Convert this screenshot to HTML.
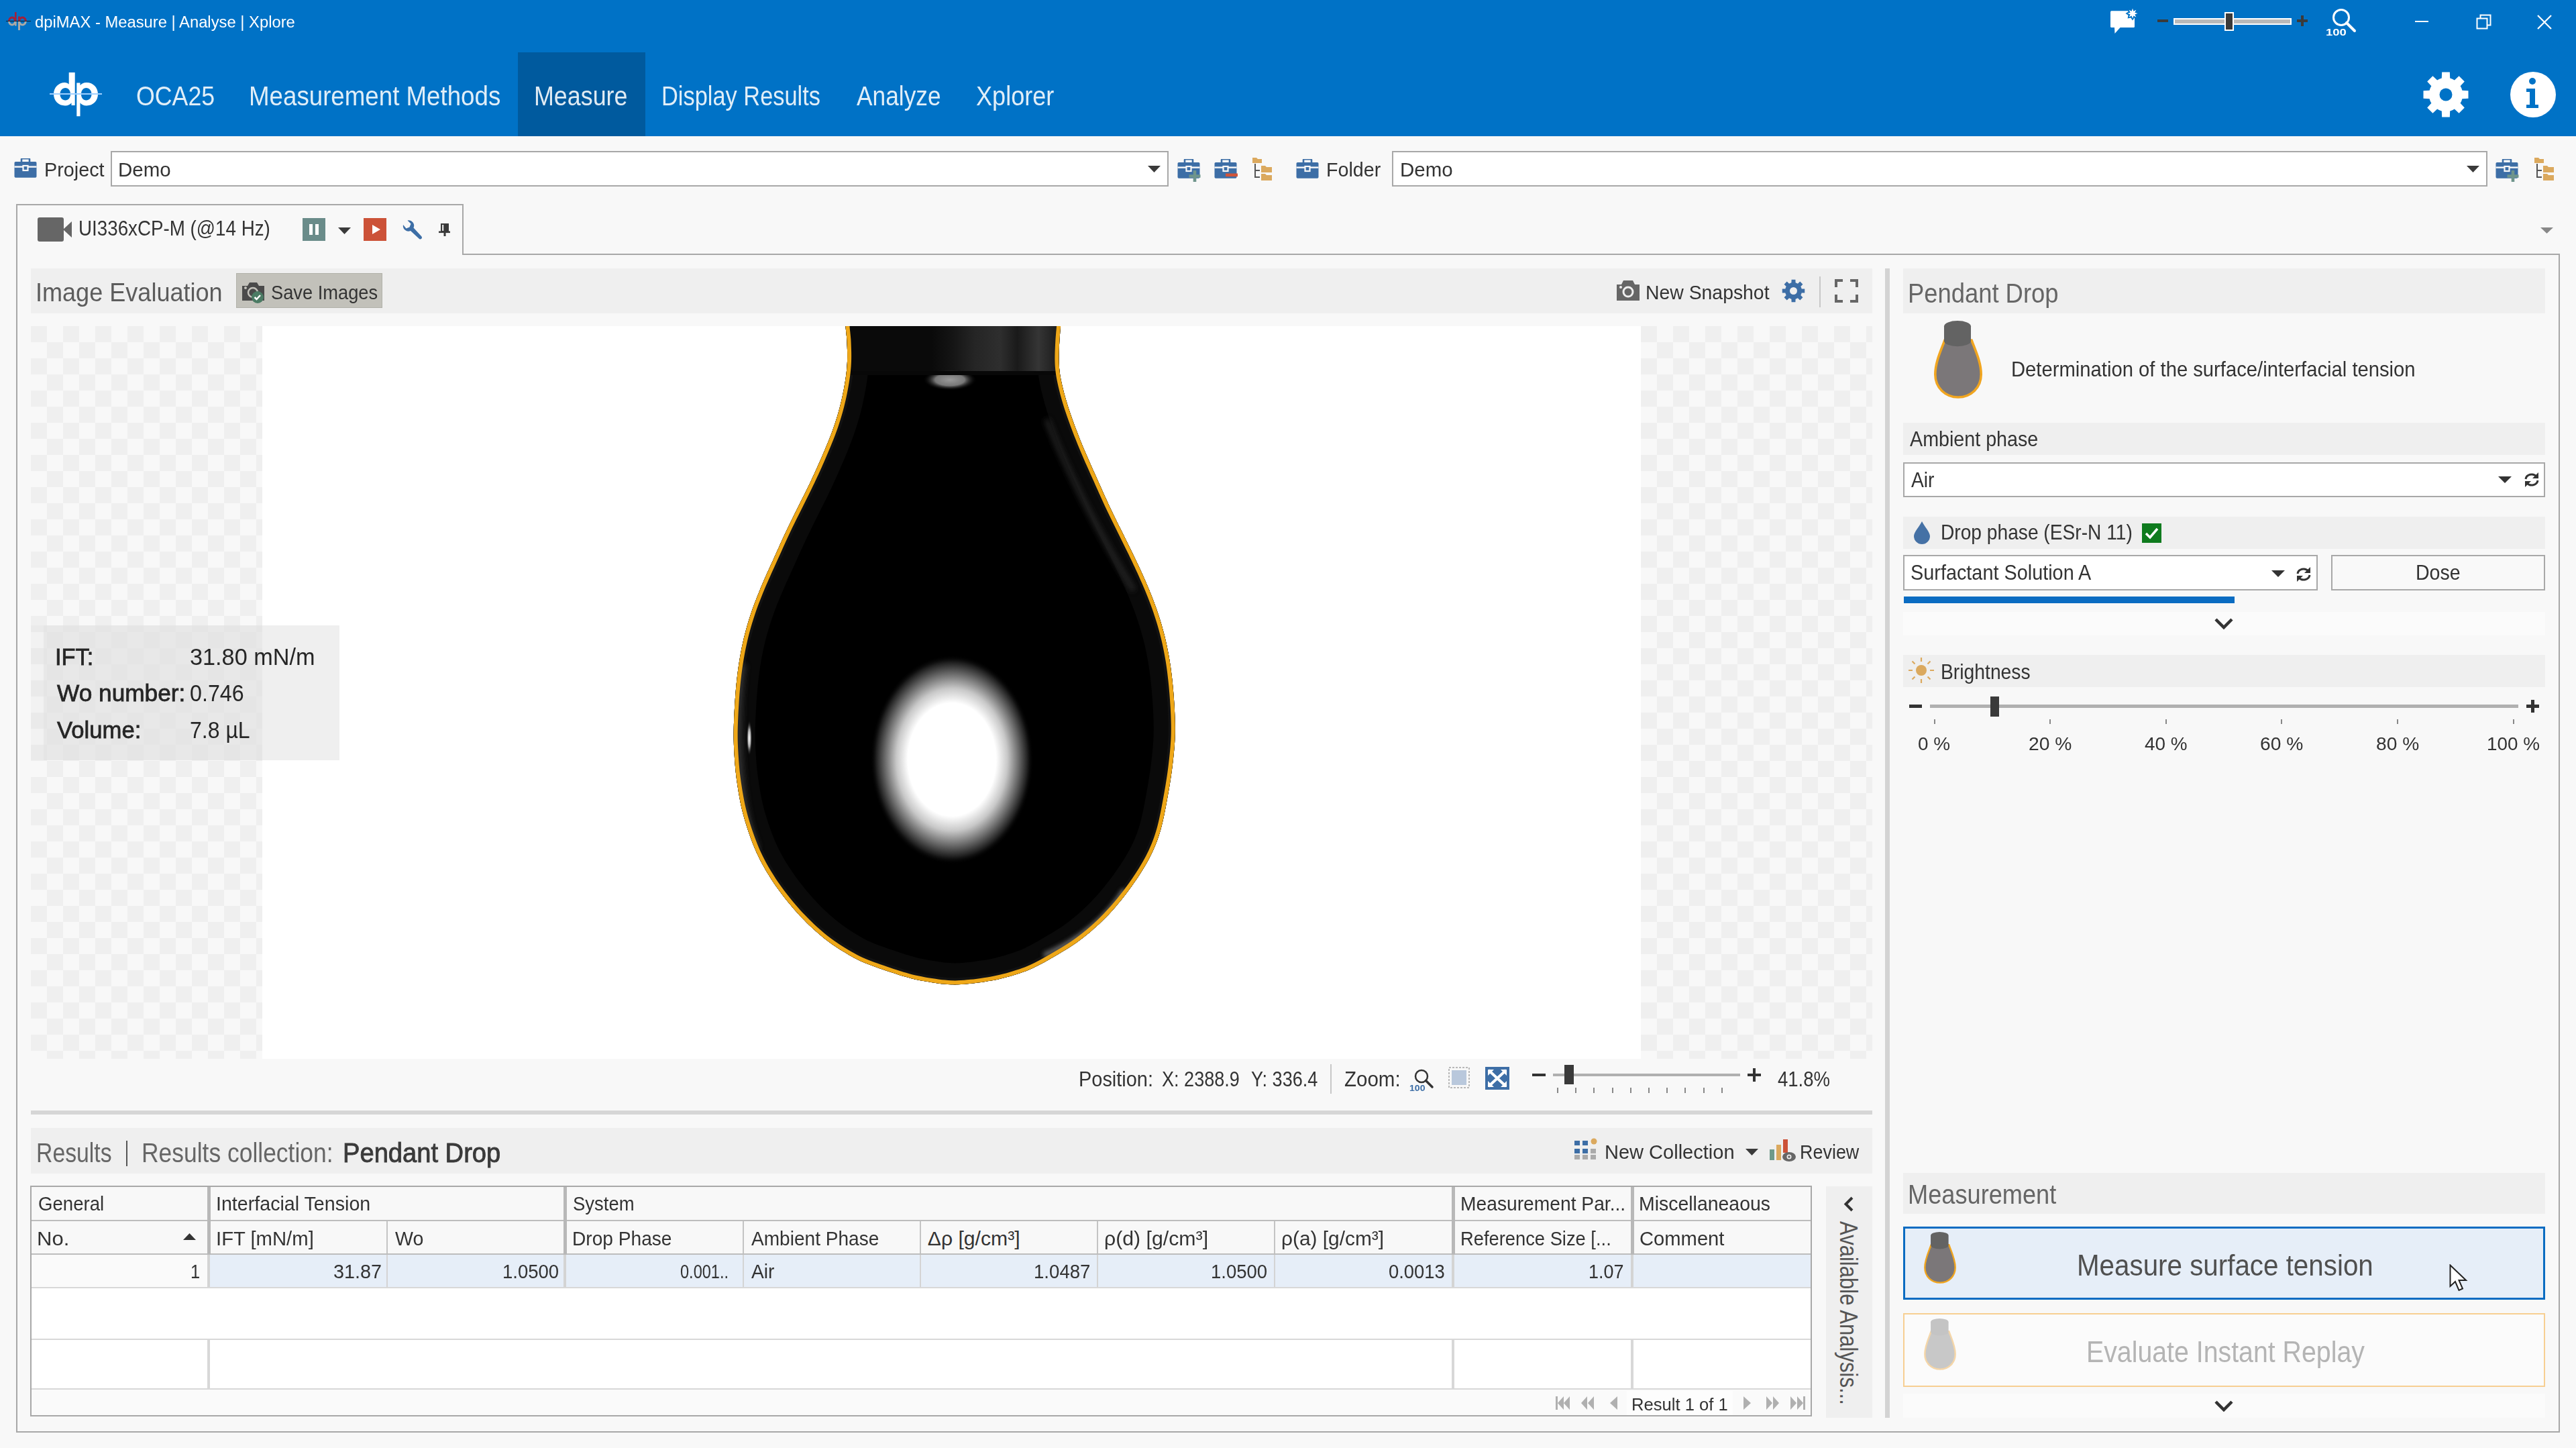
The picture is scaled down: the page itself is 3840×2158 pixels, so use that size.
<!DOCTYPE html>
<html><head><meta charset="utf-8"><title>dpiMAX</title>
<style>
html,body{margin:0;padding:0}
body{width:3840px;height:2158px;position:relative;overflow:hidden;background:#f8f8f8;font-family:"Liberation Sans",sans-serif}
.r{position:absolute;display:block}
.t{position:absolute;white-space:nowrap;transform-origin:0 0;font-family:"Liberation Sans",sans-serif}
</style></head><body>
<div class="r" style="left:0px;top:0px;width:3840px;height:203px;background:#0072c6;"></div>
<div class="r" style="left:772px;top:78px;width:190px;height:125px;background:#005a9e;"></div>
<svg class="r" style="left:8px;top:16px" width="40" height="32" viewBox="0 0 40 32">
<defs><clipPath id="ct"><rect x="0" y="0" width="40" height="15.5"/></clipPath><clipPath id="cb"><rect x="0" y="15.5" width="40" height="17"/></clipPath></defs>
<g clip-path="url(#ct)" fill="#a3203a"><path fill-rule="evenodd" d="M10 8.5a6 7 0 1 0 0.01 0zM10 11.5a3.2 4 0 1 1 -0.01 0z"/><rect x="14" y="2" width="2.6" height="20.5"/><path fill-rule="evenodd" d="M25.5 8.5a6.3 7 0 1 0 0.01 0zM25.5 11.5a3.3 4 0 1 1 -0.01 0z"/><rect x="19" y="8.5" width="3" height="20.5"/></g>
<g clip-path="url(#cb)" fill="#aaa9a6"><path fill-rule="evenodd" d="M10 8.5a6 7 0 1 0 0.01 0zM10 11.5a3.2 4 0 1 1 -0.01 0z"/><rect x="14" y="2" width="2.6" height="20.5"/><path fill-rule="evenodd" d="M25.5 8.5a6.3 7 0 1 0 0.01 0zM25.5 11.5a3.3 4 0 1 1 -0.01 0z"/><rect x="19" y="8.5" width="3" height="20.5"/></g>
<rect x="1" y="15" width="37" height="1" fill="#123"/>
</svg>
<div class="t" style="left:51.99px;top:20.84px;font-size:24.42px;line-height:24.42px;font-weight:400;color:#fff;transform:scaleX(0.9746);">dpiMAX - Measure | Analyse | Xplore</div>
<svg class="r" style="left:70px;top:104px" width="86" height="74" viewBox="0 0 86 74">
<g fill="#fff">
<path fill-rule="evenodd" d="M27 19c-10 0 -17 7.5 -17 17.3s7 17.2 17 17.2c4.5 0 7.5 -1.8 9.5 -4.2v3.7h5.2v-49h-9v17.5c-2 -1.8 -5 -2.5 -5.7 -2.5zM27.5 27c4.5 0 7.5 4 7.5 9.3s-3 9.3 -7.5 9.3s-8 -4 -8 -9.3s3.5 -9.3 8 -9.3z"/>
<path fill-rule="evenodd" d="M59 19c10 0 17 7.5 17 17.3s-7 17.2 -17 17.2c-4.5 0 -7.5 -1.8 -9.5 -4.2v20h-5.2v-49.8h5.2v3.7c2 -2.4 5 -4.2 9.5 -4.2zM58.5 27c-4.5 0 -7.5 4 -7.5 9.3s3 9.3 7.5 9.3s8 -4 8 -9.3s-3.5 -9.3 -8 -9.3z"/>
</g>
<rect x="4" y="35" width="78" height="2" fill="#9fd0ff"/>
</svg>
<div class="t" style="left:203.30px;top:124.18px;font-size:39.97px;line-height:39.97px;font-weight:400;color:rgba(255,255,255,0.88);transform:scaleX(0.8941);">OCA25</div>
<div class="t" style="left:370.97px;top:124.18px;font-size:39.97px;line-height:39.97px;font-weight:400;color:rgba(255,255,255,0.88);transform:scaleX(0.9181);">Measurement Methods</div>
<div class="t" style="left:796.04px;top:124.18px;font-size:39.97px;line-height:39.97px;font-weight:400;color:rgba(255,255,255,0.88);transform:scaleX(0.8971);">Measure</div>
<div class="t" style="left:986.16px;top:124.18px;font-size:39.97px;line-height:39.97px;font-weight:400;color:rgba(255,255,255,0.88);transform:scaleX(0.8604);">Display Results</div>
<div class="t" style="left:1276.91px;top:124.18px;font-size:39.97px;line-height:39.97px;font-weight:400;color:rgba(255,255,255,0.88);transform:scaleX(0.8832);">Analyze</div>
<div class="t" style="left:1455.19px;top:124.18px;font-size:39.97px;line-height:39.97px;font-weight:400;color:rgba(255,255,255,0.88);transform:scaleX(0.9033);">Xplorer</div>
<svg class="r" style="left:3146px;top:6px" width="44" height="46" viewBox="0 0 44 46">
<rect x="0" y="10.3" width="36" height="24.7" rx="1.5" fill="#fff"/>
<path d="M6 34.5L6.5 44L15 34.5Z" fill="#fff"/>
<path d="M33.00 3.60 L35.68 7.63 L40.42 6.68 L39.47 11.42 L43.50 14.10 L39.47 16.78 L40.42 21.52 L35.68 20.57 L33.00 24.60 L30.32 20.57 L25.58 21.52 L26.53 16.78 L22.50 14.10 L26.53 11.42 L25.58 6.68 L30.32 7.63Z" fill="#0072c6"/>
<path d="M33.00 6.50 L34.38 10.77 L38.37 8.73 L36.33 12.72 L40.60 14.10 L36.33 15.48 L38.37 19.47 L34.38 17.43 L33.00 21.70 L31.62 17.43 L27.63 19.47 L29.67 15.48 L25.40 14.10 L29.67 12.72 L27.63 8.73 L31.62 10.77Z" fill="#fff"/>
</svg>
<div class="r" style="left:3216px;top:29px;width:16px;height:4px;background:#3a3a3a;"></div>
<div class="r" style="left:3240px;top:27px;width:176px;height:10px;background:#fff;"></div>
<div class="r" style="left:3242px;top:29px;width:172px;height:6px;background:#b9b9b9;"></div>
<div class="r" style="left:3316px;top:18px;width:14px;height:28px;background:#fff;"></div>
<div class="r" style="left:3318px;top:20px;width:10px;height:24px;background:#3a3a3a;"></div>
<div class="r" style="left:3424px;top:29px;width:16px;height:4px;background:#3a3a3a;"></div>
<div class="r" style="left:3430px;top:23px;width:4px;height:16px;background:#3a3a3a;"></div>
<svg class="r" style="left:3466px;top:10px" width="50" height="46" viewBox="0 0 50 46">
<circle cx="24" cy="16" r="11.5" fill="none" stroke="#fff" stroke-width="3"/>
<path d="M32 24 L44 36" stroke="#fff" stroke-width="4" stroke-linecap="round"/>
</svg>
<div class="t" style="left:3466.84px;top:40.70px;font-size:14.53px;line-height:14.53px;font-weight:700;color:#fff;transform:scaleX(1.2749);">100</div>
<div class="r" style="left:3600px;top:31px;width:20px;height:2px;background:#fff;"></div>
<svg class="r" style="left:3690px;top:20px" width="26" height="26" viewBox="0 0 26 26">
<rect x="2.5" y="7.5" width="15" height="15" fill="none" stroke="#fff" stroke-width="2"/>
<path d="M7.5 7.5V2.5H22.5V17.5H17.5" fill="none" stroke="#fff" stroke-width="2"/>
</svg>
<svg class="r" style="left:3780px;top:20px" width="26" height="26" viewBox="0 0 26 26">
<path d="M3 3L23 23M23 3L3 23" stroke="#fff" stroke-width="2.2"/>
</svg>
<svg class="r" style="left:3606px;top:101px" width="80" height="80" viewBox="0 0 80 80"><path d="M30.37 16.76 L33.81 15.61 L34.15 6.51 L45.85 6.51 L46.19 15.61 L49.63 16.76 L52.87 18.38 L59.55 12.18 L67.82 20.45 L61.62 27.13 L63.24 30.37 L64.39 33.81 L73.49 34.15 L73.49 45.85 L64.39 46.19 L63.24 49.63 L61.62 52.87 L67.82 59.55 L59.55 67.82 L52.87 61.62 L49.63 63.24 L46.19 64.39 L45.85 73.49 L34.15 73.49 L33.81 64.39 L30.37 63.24 L27.13 61.62 L20.45 67.82 L12.18 59.55 L18.38 52.87 L16.76 49.63 L15.61 46.19 L6.51 45.85 L6.51 34.15 L15.61 33.81 L16.76 30.37 L18.38 27.13 L12.18 20.45 L20.45 12.18 L27.13 18.38Z" fill="#fff"/><circle cx="40" cy="40" r="9.5" fill="#0072c6"/></svg>
<svg class="r" style="left:3741px;top:106px" width="70" height="70" viewBox="0 0 70 70">
<circle cx="35" cy="35" r="34" fill="#fff"/>
<circle cx="34" cy="15" r="5" fill="#0072c6"/>
<path d="M25 26H38V50H43V55H25V50H30V31H25Z" fill="#0072c6"/>
</svg>
<svg class="r" style="left:21px;top:236px" width="42" height="37" viewBox="0 0 42 37">
<path d="M11 5.5V1.5Q11 0.3 12.2 0.3H21.8Q23 0.3 23 1.5V5.5" fill="none" stroke="#3d6ea6" stroke-width="2.6"/>
<rect x="0.5" y="5" width="33" height="23.7" rx="1.8" fill="#3d6ea6"/>
<rect x="0.5" y="11.4" width="33" height="2.4" fill="#f8f8f8"/>
<rect x="13.5" y="11" width="7" height="7" fill="#3d6ea6" stroke="#f8f8f8" stroke-width="2.2"/></svg>
<div class="t" style="left:65.63px;top:237.79px;font-size:29.80px;line-height:29.80px;font-weight:400;color:#333;transform:scaleX(0.9660);">Project</div>
<div class="r" style="left:165px;top:225px;width:1577px;height:53px;background:#fff;border:2px solid #a8a8a8;box-sizing:border-box"></div>
<div class="t" style="left:175.57px;top:237.79px;font-size:29.80px;line-height:29.80px;font-weight:400;color:#333;transform:scaleX(0.9890);">Demo</div>
<svg class="r" style="left:1711px;top:247px" width="19" height="10" viewBox="0 0 19 10"><path d="M0 0H19L9.5 10Z" fill="#3a3a3a"/></svg>
<svg class="r" style="left:1755px;top:237px" width="42" height="37" viewBox="0 0 42 37">
<path d="M11 5.5V1.5Q11 0.3 12.2 0.3H21.8Q23 0.3 23 1.5V5.5" fill="none" stroke="#3d6ea6" stroke-width="2.6"/>
<rect x="0.5" y="5" width="33" height="23.7" rx="1.8" fill="#3d6ea6"/>
<rect x="0.5" y="11.4" width="33" height="2.4" fill="#f8f8f8"/>
<rect x="13.5" y="11" width="7" height="7" fill="#3d6ea6" stroke="#f8f8f8" stroke-width="2.2"/><path d="M26 17V34M17.5 25.5H34.5" stroke="#6f958c" stroke-width="4.6"/></svg>
<svg class="r" style="left:1810px;top:237px" width="42" height="37" viewBox="0 0 42 37">
<path d="M11 5.5V1.5Q11 0.3 12.2 0.3H21.8Q23 0.3 23 1.5V5.5" fill="none" stroke="#3d6ea6" stroke-width="2.6"/>
<rect x="0.5" y="5" width="33" height="23.7" rx="1.8" fill="#3d6ea6"/>
<rect x="0.5" y="11.4" width="33" height="2.4" fill="#f8f8f8"/>
<rect x="13.5" y="11" width="7" height="7" fill="#3d6ea6" stroke="#f8f8f8" stroke-width="2.2"/><rect x="17" y="21.5" width="18" height="4.6" fill="#d0543a"/></svg>
<svg class="r" style="left:1866px;top:234px" width="32" height="36" viewBox="0 0 32 36">
<path d="M1 1h6l2 2h6v6H1z" fill="#dba95e"/>
<path d="M5 10V30H12M5 20H12" fill="none" stroke="#555" stroke-width="2"/>
<path d="M14 13h6l2 2h8v8H14z" fill="#dba95e"/>
<path d="M14 25h6l2 2h8v8H14z" fill="#dba95e"/>
</svg>
<svg class="r" style="left:1932px;top:237px" width="42" height="37" viewBox="0 0 42 37">
<path d="M11 5.5V1.5Q11 0.3 12.2 0.3H21.8Q23 0.3 23 1.5V5.5" fill="none" stroke="#3d6ea6" stroke-width="2.6"/>
<rect x="0.5" y="5" width="33" height="23.7" rx="1.8" fill="#3d6ea6"/>
<rect x="0.5" y="11.4" width="33" height="2.4" fill="#f8f8f8"/>
<rect x="13.5" y="11" width="7" height="7" fill="#3d6ea6" stroke="#f8f8f8" stroke-width="2.2"/></svg>
<div class="t" style="left:1976.63px;top:237.79px;font-size:29.80px;line-height:29.80px;font-weight:400;color:#333;transform:scaleX(0.9624);">Folder</div>
<div class="r" style="left:2075px;top:225px;width:1633px;height:53px;background:#fff;border:2px solid #a8a8a8;box-sizing:border-box"></div>
<div class="t" style="left:2086.57px;top:237.79px;font-size:29.80px;line-height:29.80px;font-weight:400;color:#333;transform:scaleX(0.9890);">Demo</div>
<svg class="r" style="left:3677px;top:247px" width="19" height="10" viewBox="0 0 19 10"><path d="M0 0H19L9.5 10Z" fill="#3a3a3a"/></svg>
<svg class="r" style="left:3720px;top:237px" width="42" height="37" viewBox="0 0 42 37">
<path d="M11 5.5V1.5Q11 0.3 12.2 0.3H21.8Q23 0.3 23 1.5V5.5" fill="none" stroke="#3d6ea6" stroke-width="2.6"/>
<rect x="0.5" y="5" width="33" height="23.7" rx="1.8" fill="#3d6ea6"/>
<rect x="0.5" y="11.4" width="33" height="2.4" fill="#f8f8f8"/>
<rect x="13.5" y="11" width="7" height="7" fill="#3d6ea6" stroke="#f8f8f8" stroke-width="2.2"/><path d="M26 17V34M17.5 25.5H34.5" stroke="#6f958c" stroke-width="4.6"/></svg>
<svg class="r" style="left:3777px;top:234px" width="32" height="36" viewBox="0 0 32 36">
<path d="M1 1h6l2 2h6v6H1z" fill="#dba95e"/>
<path d="M5 10V30H12M5 20H12" fill="none" stroke="#555" stroke-width="2"/>
<path d="M14 13h6l2 2h8v8H14z" fill="#dba95e"/>
<path d="M14 25h6l2 2h8v8H14z" fill="#dba95e"/>
</svg>
<div class="r" style="left:24px;top:304px;width:667px;height:2px;background:#a8a8a8;"></div>
<div class="r" style="left:24px;top:304px;width:2px;height:1831px;background:#a8a8a8;"></div>
<div class="r" style="left:689px;top:304px;width:2px;height:76px;background:#a8a8a8;"></div>
<div class="r" style="left:689px;top:378px;width:3127px;height:2px;background:#a8a8a8;"></div>
<div class="r" style="left:3814px;top:378px;width:2px;height:1757px;background:#a8a8a8;"></div>
<div class="r" style="left:24px;top:2133px;width:3792px;height:2px;background:#a8a8a8;"></div>
<svg class="r" style="left:3787px;top:339px" width="19" height="9" viewBox="0 0 19 9"><path d="M0 0H19L9.5 9Z" fill="#888"/></svg>
<svg class="r" style="left:56px;top:324px" width="52" height="36" viewBox="0 0 52 36">
<rect x="0" y="0" width="39" height="36" rx="3" fill="#666"/>
<path d="M38 18L51 6V30Z" fill="#666"/>
</svg>
<div class="t" style="left:116.85px;top:325.06px;font-size:31.25px;line-height:31.25px;font-weight:400;color:#333;transform:scaleX(0.8884);">UI336xCP-M (@14 Hz)</div>
<svg class="r" style="left:451px;top:325px" width="35" height="34" viewBox="0 0 35 34">
<rect x="0" y="0" width="34" height="34" fill="#6a8c8a"/>
<rect x="10" y="9" width="5" height="16" fill="#fff"/><rect x="19" y="9" width="5" height="16" fill="#fff"/>
</svg>
<svg class="r" style="left:504px;top:339px" width="19" height="10" viewBox="0 0 19 10"><path d="M0 0H19L9.5 10Z" fill="#3a3a3a"/></svg>
<svg class="r" style="left:542px;top:325px" width="35" height="34" viewBox="0 0 35 34">
<rect x="0" y="0" width="34" height="34" fill="#cc5238"/>
<path d="M13 10L25 17L13 24Z" fill="#fff"/>
</svg>
<svg class="r" style="left:598px;top:327px" width="32" height="31" viewBox="0 0 32 31">
<path d="M3 8a8 8 0 0 0 11 9l13 12a2.5 2.5 0 0 0 3.5-3.5l-12-13a8 8 0 0 0-9-11l5 5-2 5-5 2z" fill="#3d6ea6"/>
</svg>
<svg class="r" style="left:653px;top:332px" width="20" height="21" viewBox="0 0 20 21">
<rect x="4" y="1" width="12" height="13" fill="#3a3a3a"/>
<rect x="6.2" y="3" width="2" height="9" fill="#f8f8f8"/>
<rect x="1" y="12.5" width="17" height="2.6" fill="#3a3a3a"/>
<rect x="8.5" y="15" width="3" height="5" fill="#3a3a3a"/>
</svg>
<div class="r" style="left:46px;top:400px;width:2745px;height:67px;background:#efefef;"></div>
<div class="t" style="left:52.66px;top:417.41px;font-size:38.52px;line-height:38.52px;font-weight:400;color:#5c5c5c;transform:scaleX(0.9363);">Image Evaluation</div>
<div class="r" style="left:352px;top:407px;width:218px;height:52px;background:#c2c1ba;border:1px solid #b2b2aa;box-sizing:border-box"></div>
<svg class="r" style="left:361px;top:418px" width="36" height="36" viewBox="0 0 36 36">
<path d="M0 8H8L11 3H22L25 8H33V30H0Z" fill="#4a4a4a"/>
<circle cx="16" cy="18" r="7" fill="none" stroke="#c2c1ba" stroke-width="2.5"/>
<circle cx="5" cy="11" r="2" fill="#c2c1ba"/>
<circle cx="23" cy="25" r="9" fill="#4b7b64"/>
<path d="M18.5 25l3 3 5.5-6" fill="none" stroke="#fff" stroke-width="2.5"/>
</svg>
<div class="t" style="left:403.77px;top:420.79px;font-size:29.80px;line-height:29.80px;font-weight:400;color:#333;transform:scaleX(0.9152);">Save Images</div>
<svg class="r" style="left:2410px;top:418px" width="35" height="31" viewBox="0 0 35 31">
<path d="M0 6H7L10 0H24L27 6H34V30H0Z" fill="#666"/>
<circle cx="17" cy="17" r="7" fill="none" stroke="#efefef" stroke-width="3"/>
<circle cx="6" cy="10" r="2" fill="#efefef"/>
</svg>
<div class="t" style="left:2452.66px;top:420.79px;font-size:29.80px;line-height:29.80px;font-weight:400;color:#333;transform:scaleX(0.9522);">New Snapshot</div>
<svg class="r" style="left:2656px;top:416px" width="35" height="35" viewBox="0 0 35 35"><path d="M12.69 5.88 L14.41 5.31 L14.58 0.75 L20.42 0.75 L20.59 5.31 L22.31 5.88 L23.94 6.69 L27.28 3.59 L31.41 7.72 L28.31 11.06 L29.12 12.69 L29.69 14.41 L34.25 14.58 L34.25 20.42 L29.69 20.59 L29.12 22.31 L28.31 23.94 L31.41 27.28 L27.28 31.41 L23.94 28.31 L22.31 29.12 L20.59 29.69 L20.42 34.25 L14.58 34.25 L14.41 29.69 L12.69 29.12 L11.06 28.31 L7.72 31.41 L3.59 27.28 L6.69 23.94 L5.88 22.31 L5.31 20.59 L0.75 20.42 L0.75 14.58 L5.31 14.41 L5.88 12.69 L6.69 11.06 L3.59 7.72 L7.72 3.59 L11.06 6.69Z" fill="#3d6ea6"/><circle cx="17.5" cy="17.5" r="5.5" fill="#efefef"/></svg>
<div class="r" style="left:2712px;top:412px;width:2px;height:46px;background:#c8c8c8;"></div>
<svg class="r" style="left:2735px;top:416px" width="35" height="35" viewBox="0 0 35 35">
<path d="M0 12V0H12V4H4V12Z M23 0H35V12H31V4H23Z M0 23H4V31H12V35H0Z M31 23H35V35H23V31H31Z" fill="#666"/>
</svg>
<div class="r" style="left:46px;top:486px;width:2745px;height:1092px;background:repeating-conic-gradient(#f8f8f8 0 25%,#efefef 0 50%) 0 0/48px 48px"></div>
<div class="r" style="left:391px;top:486px;width:2055px;height:1092px;background:#fff;"></div>
<svg class="r" style="left:391px;top:486px" width="2055" height="1092" viewBox="391 486 2055 1092">
<defs>
<radialGradient id="hl" cx="1419" cy="1132" r="156" gradientUnits="userSpaceOnUse" gradientTransform="translate(1419 1132) scale(0.78 1) translate(-1419 -1132)">
<stop offset="0" stop-color="#fff"/><stop offset="0.54" stop-color="#fff"/><stop offset="0.68" stop-color="#c8c8c8"/><stop offset="0.82" stop-color="#6a6a6a"/><stop offset="0.93" stop-color="#1e1e1e"/><stop offset="1" stop-color="#000" stop-opacity="0"/>
</radialGradient>
<radialGradient id="nh"><stop offset="0" stop-color="#9a9a9a"/><stop offset="0.55" stop-color="#777"/><stop offset="1" stop-color="#000" stop-opacity="0"/></radialGradient>
<linearGradient id="ndl" x1="0" x2="1" y1="0" y2="0">
<stop offset="0" stop-color="#0a0a0a"/><stop offset="0.4" stop-color="#0a0a0a"/><stop offset="0.5" stop-color="#151515"/><stop offset="0.6" stop-color="#252525"/><stop offset="0.72" stop-color="#2e2e2e"/><stop offset="0.8" stop-color="#1a1a1a"/><stop offset="0.9" stop-color="#353535"/><stop offset="1" stop-color="#181818"/>
</linearGradient>
<radialGradient id="sp"><stop offset="0" stop-color="#fff"/><stop offset="0.5" stop-color="#aaa"/><stop offset="1" stop-color="#222" stop-opacity="0"/></radialGradient>
<filter id="bl4" x="-50%" y="-50%" width="200%" height="200%"><feGaussianBlur stdDeviation="4"/></filter>
<filter id="bl3" x="-50%" y="-50%" width="200%" height="200%"><feGaussianBlur stdDeviation="3"/></filter>
<clipPath id="dc"><path d="M1260.50 470.00 C1260.50 472.67 1260.34 481.67 1260.50 486.00 C1260.66 490.33 1261.12 492.64 1261.43 495.96 C1261.75 499.28 1262.14 502.57 1262.37 505.92 C1262.59 509.27 1262.67 512.72 1262.80 516.05 C1262.92 519.38 1263.06 522.60 1263.11 525.90 C1263.16 529.20 1263.16 532.54 1263.08 535.85 C1262.99 539.17 1262.84 542.49 1262.61 545.80 C1262.37 549.11 1262.05 552.42 1261.66 555.71 C1261.28 559.01 1260.81 562.30 1260.31 565.59 C1259.81 568.88 1259.25 572.16 1258.67 575.44 C1258.09 578.72 1257.48 582.00 1256.82 585.26 C1256.17 588.53 1255.49 591.79 1254.76 595.03 C1254.02 598.28 1253.25 601.52 1252.42 604.74 C1251.60 607.97 1250.72 611.18 1249.81 614.39 C1248.90 617.59 1247.95 620.78 1246.96 623.96 C1245.97 627.14 1244.95 630.31 1243.88 633.46 C1242.81 636.62 1241.69 639.76 1240.55 642.88 C1239.40 646.01 1238.20 649.12 1236.99 652.22 C1235.77 655.32 1234.52 658.41 1233.26 661.50 C1232.00 664.58 1230.72 667.66 1229.42 670.73 C1228.13 673.81 1226.82 676.87 1225.49 679.93 C1224.17 682.99 1222.84 686.05 1221.49 689.10 C1220.14 692.15 1218.79 695.19 1217.42 698.23 C1216.05 701.27 1214.67 704.31 1213.27 707.34 C1211.87 710.36 1210.46 713.38 1209.03 716.39 C1207.60 719.41 1206.15 722.41 1204.69 725.41 C1203.23 728.40 1201.76 731.39 1200.28 734.38 C1198.80 737.37 1197.31 740.35 1195.82 743.34 C1194.34 746.32 1192.84 749.31 1191.36 752.29 C1189.87 755.27 1188.37 758.25 1186.88 761.24 C1185.40 764.22 1183.91 767.21 1182.42 770.19 C1180.94 773.18 1179.46 776.17 1178.00 779.16 C1176.53 782.16 1175.07 785.15 1173.63 788.16 C1172.19 791.17 1170.77 794.18 1169.36 797.20 C1167.95 800.23 1166.57 803.26 1165.18 806.29 C1163.80 809.33 1162.44 812.37 1161.07 815.41 C1159.70 818.45 1158.34 821.49 1156.97 824.53 C1155.60 827.57 1154.23 830.61 1152.86 833.65 C1151.48 836.69 1150.10 839.73 1148.72 842.76 C1147.34 845.80 1145.95 848.83 1144.58 851.87 C1143.21 854.91 1141.84 857.94 1140.49 860.99 C1139.14 864.04 1137.80 867.10 1136.49 870.16 C1135.18 873.22 1133.89 876.30 1132.62 879.38 C1131.35 882.46 1130.11 885.55 1128.88 888.66 C1127.66 891.76 1126.45 894.86 1125.28 897.98 C1124.11 901.10 1122.96 904.23 1121.86 907.37 C1120.75 910.51 1119.68 913.67 1118.64 916.84 C1117.61 920.00 1116.61 923.18 1115.64 926.37 C1114.67 929.56 1113.73 932.75 1112.83 935.96 C1111.93 939.17 1111.07 942.38 1110.24 945.61 C1109.42 948.84 1108.64 952.08 1107.90 955.32 C1107.15 958.57 1106.45 961.83 1105.78 965.09 C1105.11 968.35 1104.48 971.63 1103.88 974.90 C1103.27 978.18 1102.70 981.46 1102.17 984.75 C1101.63 988.04 1101.13 991.33 1100.66 994.63 C1100.20 997.93 1099.76 1001.24 1099.35 1004.54 C1098.94 1007.85 1098.56 1011.16 1098.20 1014.48 C1097.85 1017.79 1097.51 1021.11 1097.21 1024.43 C1096.90 1027.74 1096.63 1031.07 1096.37 1034.39 C1096.11 1037.71 1095.88 1041.04 1095.66 1044.37 C1095.44 1047.69 1095.24 1051.02 1095.05 1054.35 C1094.86 1057.68 1094.69 1061.01 1094.53 1064.34 C1094.37 1067.67 1094.21 1071.00 1094.09 1074.33 C1093.96 1077.66 1093.85 1080.99 1093.77 1084.32 C1093.70 1087.65 1093.64 1090.98 1093.64 1094.31 C1093.63 1097.65 1093.67 1100.98 1093.74 1104.30 C1093.82 1107.63 1093.95 1110.96 1094.09 1114.29 C1094.24 1117.62 1094.43 1120.95 1094.63 1124.27 C1094.83 1127.60 1095.05 1130.93 1095.30 1134.25 C1095.54 1137.57 1095.81 1140.90 1096.12 1144.21 C1096.42 1147.53 1096.76 1150.84 1097.15 1154.15 C1097.53 1157.46 1097.96 1160.76 1098.41 1164.06 C1098.87 1167.36 1099.37 1170.66 1099.88 1173.95 C1100.39 1177.24 1100.93 1180.54 1101.49 1183.82 C1102.06 1187.10 1102.64 1190.38 1103.28 1193.65 C1103.92 1196.91 1104.59 1200.17 1105.33 1203.42 C1106.07 1206.66 1106.87 1209.89 1107.72 1213.11 C1108.57 1216.32 1109.48 1219.52 1110.43 1222.72 C1111.37 1225.91 1112.37 1229.09 1113.39 1232.26 C1114.40 1235.43 1115.46 1238.60 1116.54 1241.74 C1117.63 1244.89 1118.74 1248.04 1119.90 1251.16 C1121.06 1254.28 1122.25 1257.39 1123.50 1260.47 C1124.75 1263.55 1126.05 1266.62 1127.41 1269.65 C1128.77 1272.69 1130.18 1275.70 1131.65 1278.69 C1133.12 1281.67 1134.65 1284.63 1136.23 1287.56 C1137.80 1290.49 1139.43 1293.39 1141.11 1296.27 C1142.78 1299.14 1144.51 1301.99 1146.28 1304.81 C1148.04 1307.64 1149.85 1310.43 1151.69 1313.21 C1153.54 1315.98 1155.42 1318.73 1157.34 1321.45 C1159.26 1324.17 1161.21 1326.87 1163.20 1329.54 C1165.19 1332.22 1167.21 1334.87 1169.26 1337.49 C1171.31 1340.12 1173.39 1342.72 1175.50 1345.29 C1177.61 1347.87 1179.76 1350.42 1181.93 1352.94 C1184.11 1355.46 1186.32 1357.96 1188.55 1360.43 C1190.79 1362.89 1193.06 1365.34 1195.35 1367.75 C1197.65 1370.15 1199.98 1372.54 1202.34 1374.88 C1204.71 1377.22 1207.11 1379.53 1209.54 1381.81 C1211.97 1384.08 1214.44 1386.32 1216.93 1388.52 C1219.43 1390.72 1221.95 1392.90 1224.51 1395.02 C1227.07 1397.14 1229.66 1399.23 1232.30 1401.25 C1234.93 1403.28 1237.61 1405.25 1240.32 1407.17 C1243.03 1409.08 1245.80 1410.93 1248.58 1412.75 C1251.36 1414.57 1254.19 1416.34 1257.02 1418.08 C1259.86 1419.83 1262.71 1421.54 1265.59 1423.20 C1268.47 1424.86 1271.37 1426.50 1274.31 1428.04 C1277.25 1429.58 1280.21 1431.06 1283.22 1432.44 C1286.23 1433.83 1289.29 1435.11 1292.37 1436.35 C1295.45 1437.59 1298.57 1438.73 1301.70 1439.87 C1304.83 1441.00 1307.98 1442.08 1311.13 1443.16 C1314.28 1444.25 1317.44 1445.32 1320.60 1446.38 C1323.76 1447.45 1326.92 1448.52 1330.08 1449.57 C1333.24 1450.62 1336.41 1451.67 1339.58 1452.68 C1342.75 1453.69 1345.93 1454.70 1349.12 1455.62 C1352.32 1456.55 1355.52 1457.43 1358.74 1458.23 C1361.97 1459.04 1365.21 1459.76 1368.47 1460.44 C1371.72 1461.12 1374.99 1461.71 1378.27 1462.30 C1381.55 1462.88 1384.84 1463.41 1388.13 1463.93 C1391.42 1464.44 1394.71 1464.94 1398.01 1465.39 C1401.30 1465.83 1404.60 1466.26 1407.90 1466.58 C1411.19 1466.90 1414.49 1467.16 1417.79 1467.29 C1421.09 1467.42 1424.40 1467.44 1427.70 1467.36 C1431.00 1467.27 1434.31 1467.06 1437.61 1466.80 C1440.92 1466.54 1444.23 1466.18 1447.53 1465.82 C1450.84 1465.46 1454.15 1465.04 1457.45 1464.61 C1460.75 1464.18 1464.05 1463.73 1467.34 1463.23 C1470.63 1462.73 1473.92 1462.21 1477.19 1461.61 C1480.46 1461.01 1483.72 1460.36 1486.97 1459.64 C1490.22 1458.93 1493.45 1458.14 1496.67 1457.31 C1499.89 1456.49 1503.10 1455.60 1506.30 1454.68 C1509.50 1453.77 1512.69 1452.82 1515.86 1451.81 C1519.02 1450.79 1522.18 1449.75 1525.30 1448.61 C1528.41 1447.48 1531.50 1446.27 1534.55 1444.98 C1537.60 1443.68 1540.61 1442.29 1543.60 1440.84 C1546.59 1439.39 1549.53 1437.84 1552.47 1436.28 C1555.40 1434.71 1558.31 1433.08 1561.21 1431.45 C1564.12 1429.82 1567.00 1428.15 1569.89 1426.48 C1572.77 1424.80 1575.65 1423.12 1578.51 1421.42 C1581.38 1419.72 1584.25 1418.01 1587.09 1416.27 C1589.93 1414.53 1592.76 1412.79 1595.56 1410.98 C1598.35 1409.17 1601.12 1407.33 1603.84 1405.43 C1606.56 1403.52 1609.25 1401.56 1611.89 1399.55 C1614.54 1397.54 1617.15 1395.47 1619.73 1393.37 C1622.31 1391.27 1624.86 1389.13 1627.39 1386.95 C1629.91 1384.78 1632.40 1382.57 1634.86 1380.33 C1637.32 1378.08 1639.74 1375.80 1642.13 1373.48 C1644.51 1371.16 1646.86 1368.80 1649.18 1366.42 C1651.50 1364.03 1653.79 1361.61 1656.04 1359.15 C1658.30 1356.70 1660.52 1354.22 1662.70 1351.71 C1664.89 1349.19 1667.03 1346.65 1669.15 1344.08 C1671.26 1341.50 1673.34 1338.90 1675.39 1336.28 C1677.44 1333.65 1679.47 1331.00 1681.46 1328.33 C1683.45 1325.66 1685.42 1322.97 1687.36 1320.26 C1689.30 1317.55 1691.21 1314.82 1693.08 1312.07 C1694.96 1309.32 1696.82 1306.55 1698.63 1303.75 C1700.44 1300.96 1702.22 1298.14 1703.95 1295.30 C1705.68 1292.46 1707.38 1289.59 1709.02 1286.70 C1710.66 1283.80 1712.25 1280.88 1713.78 1277.93 C1715.31 1274.98 1716.79 1272.00 1718.20 1268.98 C1719.60 1265.97 1720.94 1262.93 1722.20 1259.86 C1723.46 1256.78 1724.64 1253.68 1725.75 1250.55 C1726.86 1247.42 1727.89 1244.26 1728.85 1241.08 C1729.81 1237.90 1730.68 1234.69 1731.51 1231.47 C1732.34 1228.25 1733.09 1225.01 1733.82 1221.76 C1734.55 1218.51 1735.22 1215.25 1735.89 1211.98 C1736.56 1208.72 1737.19 1205.44 1737.81 1202.17 C1738.44 1198.89 1739.04 1195.61 1739.64 1192.33 C1740.24 1189.05 1740.82 1185.77 1741.40 1182.49 C1741.98 1179.20 1742.55 1175.92 1743.10 1172.63 C1743.66 1169.34 1744.21 1166.05 1744.72 1162.76 C1745.24 1159.47 1745.74 1156.17 1746.20 1152.87 C1746.67 1149.57 1747.10 1146.27 1747.52 1142.96 C1747.93 1139.65 1748.32 1136.34 1748.69 1133.03 C1749.06 1129.72 1749.41 1126.40 1749.74 1123.09 C1750.07 1119.77 1750.38 1116.45 1750.64 1113.13 C1750.91 1109.81 1751.14 1106.49 1751.31 1103.17 C1751.49 1099.85 1751.61 1096.52 1751.67 1093.19 C1751.74 1089.87 1751.75 1086.54 1751.73 1083.21 C1751.71 1079.88 1751.64 1076.55 1751.54 1073.22 C1751.45 1069.88 1751.33 1066.55 1751.18 1063.22 C1751.04 1059.89 1750.87 1056.56 1750.68 1053.24 C1750.49 1049.91 1750.28 1046.58 1750.05 1043.25 C1749.82 1039.93 1749.57 1036.60 1749.30 1033.28 C1749.03 1029.96 1748.74 1026.64 1748.43 1023.32 C1748.12 1020.00 1747.78 1016.68 1747.42 1013.37 C1747.06 1010.06 1746.67 1006.75 1746.26 1003.44 C1745.85 1000.13 1745.41 996.83 1744.94 993.53 C1744.46 990.23 1743.96 986.94 1743.42 983.65 C1742.87 980.37 1742.29 977.08 1741.68 973.81 C1741.06 970.54 1740.41 967.27 1739.73 964.01 C1739.05 960.75 1738.33 957.49 1737.58 954.25 C1736.82 951.00 1736.02 947.77 1735.19 944.54 C1734.36 941.32 1733.48 938.11 1732.57 934.90 C1731.66 931.70 1730.71 928.50 1729.74 925.32 C1728.76 922.13 1727.76 918.95 1726.71 915.79 C1725.67 912.63 1724.60 909.47 1723.49 906.33 C1722.38 903.19 1721.23 900.06 1720.05 896.94 C1718.88 893.82 1717.68 890.72 1716.45 887.62 C1715.23 884.52 1713.98 881.43 1712.71 878.34 C1711.44 875.26 1710.15 872.19 1708.83 869.13 C1707.51 866.07 1706.17 863.02 1704.81 859.97 C1703.45 856.93 1702.07 853.89 1700.68 850.86 C1699.29 847.83 1697.88 844.81 1696.46 841.79 C1695.05 838.77 1693.62 835.76 1692.18 832.75 C1690.74 829.75 1689.29 826.74 1687.84 823.74 C1686.38 820.74 1684.91 817.75 1683.44 814.76 C1681.97 811.76 1680.49 808.77 1679.02 805.78 C1677.54 802.80 1676.06 799.81 1674.58 796.82 C1673.10 793.83 1671.62 790.84 1670.13 787.86 C1668.65 784.87 1667.17 781.88 1665.69 778.89 C1664.22 775.90 1662.74 772.92 1661.27 769.92 C1659.81 766.93 1658.35 763.93 1656.90 760.92 C1655.46 757.92 1654.03 754.91 1652.62 751.89 C1651.21 748.87 1649.81 745.84 1648.43 742.80 C1647.05 739.77 1645.68 736.73 1644.31 733.69 C1642.95 730.65 1641.59 727.60 1640.23 724.56 C1638.87 721.51 1637.51 718.47 1636.15 715.42 C1634.79 712.38 1633.42 709.34 1632.06 706.29 C1630.69 703.25 1629.33 700.21 1627.97 697.16 C1626.61 694.12 1625.25 691.07 1623.90 688.02 C1622.56 684.97 1621.22 681.92 1619.90 678.86 C1618.58 675.80 1617.28 672.73 1615.98 669.65 C1614.69 666.58 1613.42 663.50 1612.16 660.41 C1610.90 657.33 1609.65 654.23 1608.42 651.14 C1607.19 648.04 1605.98 644.93 1604.78 641.82 C1603.59 638.71 1602.42 635.59 1601.26 632.46 C1600.11 629.33 1598.97 626.20 1597.86 623.06 C1596.75 619.91 1595.66 616.77 1594.60 613.61 C1593.54 610.45 1592.50 607.28 1591.50 604.10 C1590.51 600.92 1589.55 597.73 1588.63 594.53 C1587.71 591.33 1586.83 588.12 1585.98 584.90 C1585.14 581.68 1584.33 578.45 1583.57 575.21 C1582.82 571.97 1582.09 568.72 1581.46 565.47 C1580.83 562.21 1580.26 558.94 1579.81 555.67 C1579.37 552.39 1579.03 549.10 1578.80 545.80 C1578.56 542.50 1578.46 539.19 1578.41 535.88 C1578.37 532.56 1578.43 529.23 1578.52 525.93 C1578.60 522.63 1578.77 519.41 1578.92 516.08 C1579.08 512.75 1579.23 509.30 1579.44 505.95 C1579.66 502.60 1579.96 499.30 1580.22 495.97 C1580.48 492.65 1580.87 490.33 1581.00 486.00 C1581.13 481.67 1581.00 472.67 1581.00 470.00 Z"/></clipPath>
</defs>
<path d="M1260.50 470.00 C1260.50 472.67 1260.34 481.67 1260.50 486.00 C1260.66 490.33 1261.12 492.64 1261.43 495.96 C1261.75 499.28 1262.14 502.57 1262.37 505.92 C1262.59 509.27 1262.67 512.72 1262.80 516.05 C1262.92 519.38 1263.06 522.60 1263.11 525.90 C1263.16 529.20 1263.16 532.54 1263.08 535.85 C1262.99 539.17 1262.84 542.49 1262.61 545.80 C1262.37 549.11 1262.05 552.42 1261.66 555.71 C1261.28 559.01 1260.81 562.30 1260.31 565.59 C1259.81 568.88 1259.25 572.16 1258.67 575.44 C1258.09 578.72 1257.48 582.00 1256.82 585.26 C1256.17 588.53 1255.49 591.79 1254.76 595.03 C1254.02 598.28 1253.25 601.52 1252.42 604.74 C1251.60 607.97 1250.72 611.18 1249.81 614.39 C1248.90 617.59 1247.95 620.78 1246.96 623.96 C1245.97 627.14 1244.95 630.31 1243.88 633.46 C1242.81 636.62 1241.69 639.76 1240.55 642.88 C1239.40 646.01 1238.20 649.12 1236.99 652.22 C1235.77 655.32 1234.52 658.41 1233.26 661.50 C1232.00 664.58 1230.72 667.66 1229.42 670.73 C1228.13 673.81 1226.82 676.87 1225.49 679.93 C1224.17 682.99 1222.84 686.05 1221.49 689.10 C1220.14 692.15 1218.79 695.19 1217.42 698.23 C1216.05 701.27 1214.67 704.31 1213.27 707.34 C1211.87 710.36 1210.46 713.38 1209.03 716.39 C1207.60 719.41 1206.15 722.41 1204.69 725.41 C1203.23 728.40 1201.76 731.39 1200.28 734.38 C1198.80 737.37 1197.31 740.35 1195.82 743.34 C1194.34 746.32 1192.84 749.31 1191.36 752.29 C1189.87 755.27 1188.37 758.25 1186.88 761.24 C1185.40 764.22 1183.91 767.21 1182.42 770.19 C1180.94 773.18 1179.46 776.17 1178.00 779.16 C1176.53 782.16 1175.07 785.15 1173.63 788.16 C1172.19 791.17 1170.77 794.18 1169.36 797.20 C1167.95 800.23 1166.57 803.26 1165.18 806.29 C1163.80 809.33 1162.44 812.37 1161.07 815.41 C1159.70 818.45 1158.34 821.49 1156.97 824.53 C1155.60 827.57 1154.23 830.61 1152.86 833.65 C1151.48 836.69 1150.10 839.73 1148.72 842.76 C1147.34 845.80 1145.95 848.83 1144.58 851.87 C1143.21 854.91 1141.84 857.94 1140.49 860.99 C1139.14 864.04 1137.80 867.10 1136.49 870.16 C1135.18 873.22 1133.89 876.30 1132.62 879.38 C1131.35 882.46 1130.11 885.55 1128.88 888.66 C1127.66 891.76 1126.45 894.86 1125.28 897.98 C1124.11 901.10 1122.96 904.23 1121.86 907.37 C1120.75 910.51 1119.68 913.67 1118.64 916.84 C1117.61 920.00 1116.61 923.18 1115.64 926.37 C1114.67 929.56 1113.73 932.75 1112.83 935.96 C1111.93 939.17 1111.07 942.38 1110.24 945.61 C1109.42 948.84 1108.64 952.08 1107.90 955.32 C1107.15 958.57 1106.45 961.83 1105.78 965.09 C1105.11 968.35 1104.48 971.63 1103.88 974.90 C1103.27 978.18 1102.70 981.46 1102.17 984.75 C1101.63 988.04 1101.13 991.33 1100.66 994.63 C1100.20 997.93 1099.76 1001.24 1099.35 1004.54 C1098.94 1007.85 1098.56 1011.16 1098.20 1014.48 C1097.85 1017.79 1097.51 1021.11 1097.21 1024.43 C1096.90 1027.74 1096.63 1031.07 1096.37 1034.39 C1096.11 1037.71 1095.88 1041.04 1095.66 1044.37 C1095.44 1047.69 1095.24 1051.02 1095.05 1054.35 C1094.86 1057.68 1094.69 1061.01 1094.53 1064.34 C1094.37 1067.67 1094.21 1071.00 1094.09 1074.33 C1093.96 1077.66 1093.85 1080.99 1093.77 1084.32 C1093.70 1087.65 1093.64 1090.98 1093.64 1094.31 C1093.63 1097.65 1093.67 1100.98 1093.74 1104.30 C1093.82 1107.63 1093.95 1110.96 1094.09 1114.29 C1094.24 1117.62 1094.43 1120.95 1094.63 1124.27 C1094.83 1127.60 1095.05 1130.93 1095.30 1134.25 C1095.54 1137.57 1095.81 1140.90 1096.12 1144.21 C1096.42 1147.53 1096.76 1150.84 1097.15 1154.15 C1097.53 1157.46 1097.96 1160.76 1098.41 1164.06 C1098.87 1167.36 1099.37 1170.66 1099.88 1173.95 C1100.39 1177.24 1100.93 1180.54 1101.49 1183.82 C1102.06 1187.10 1102.64 1190.38 1103.28 1193.65 C1103.92 1196.91 1104.59 1200.17 1105.33 1203.42 C1106.07 1206.66 1106.87 1209.89 1107.72 1213.11 C1108.57 1216.32 1109.48 1219.52 1110.43 1222.72 C1111.37 1225.91 1112.37 1229.09 1113.39 1232.26 C1114.40 1235.43 1115.46 1238.60 1116.54 1241.74 C1117.63 1244.89 1118.74 1248.04 1119.90 1251.16 C1121.06 1254.28 1122.25 1257.39 1123.50 1260.47 C1124.75 1263.55 1126.05 1266.62 1127.41 1269.65 C1128.77 1272.69 1130.18 1275.70 1131.65 1278.69 C1133.12 1281.67 1134.65 1284.63 1136.23 1287.56 C1137.80 1290.49 1139.43 1293.39 1141.11 1296.27 C1142.78 1299.14 1144.51 1301.99 1146.28 1304.81 C1148.04 1307.64 1149.85 1310.43 1151.69 1313.21 C1153.54 1315.98 1155.42 1318.73 1157.34 1321.45 C1159.26 1324.17 1161.21 1326.87 1163.20 1329.54 C1165.19 1332.22 1167.21 1334.87 1169.26 1337.49 C1171.31 1340.12 1173.39 1342.72 1175.50 1345.29 C1177.61 1347.87 1179.76 1350.42 1181.93 1352.94 C1184.11 1355.46 1186.32 1357.96 1188.55 1360.43 C1190.79 1362.89 1193.06 1365.34 1195.35 1367.75 C1197.65 1370.15 1199.98 1372.54 1202.34 1374.88 C1204.71 1377.22 1207.11 1379.53 1209.54 1381.81 C1211.97 1384.08 1214.44 1386.32 1216.93 1388.52 C1219.43 1390.72 1221.95 1392.90 1224.51 1395.02 C1227.07 1397.14 1229.66 1399.23 1232.30 1401.25 C1234.93 1403.28 1237.61 1405.25 1240.32 1407.17 C1243.03 1409.08 1245.80 1410.93 1248.58 1412.75 C1251.36 1414.57 1254.19 1416.34 1257.02 1418.08 C1259.86 1419.83 1262.71 1421.54 1265.59 1423.20 C1268.47 1424.86 1271.37 1426.50 1274.31 1428.04 C1277.25 1429.58 1280.21 1431.06 1283.22 1432.44 C1286.23 1433.83 1289.29 1435.11 1292.37 1436.35 C1295.45 1437.59 1298.57 1438.73 1301.70 1439.87 C1304.83 1441.00 1307.98 1442.08 1311.13 1443.16 C1314.28 1444.25 1317.44 1445.32 1320.60 1446.38 C1323.76 1447.45 1326.92 1448.52 1330.08 1449.57 C1333.24 1450.62 1336.41 1451.67 1339.58 1452.68 C1342.75 1453.69 1345.93 1454.70 1349.12 1455.62 C1352.32 1456.55 1355.52 1457.43 1358.74 1458.23 C1361.97 1459.04 1365.21 1459.76 1368.47 1460.44 C1371.72 1461.12 1374.99 1461.71 1378.27 1462.30 C1381.55 1462.88 1384.84 1463.41 1388.13 1463.93 C1391.42 1464.44 1394.71 1464.94 1398.01 1465.39 C1401.30 1465.83 1404.60 1466.26 1407.90 1466.58 C1411.19 1466.90 1414.49 1467.16 1417.79 1467.29 C1421.09 1467.42 1424.40 1467.44 1427.70 1467.36 C1431.00 1467.27 1434.31 1467.06 1437.61 1466.80 C1440.92 1466.54 1444.23 1466.18 1447.53 1465.82 C1450.84 1465.46 1454.15 1465.04 1457.45 1464.61 C1460.75 1464.18 1464.05 1463.73 1467.34 1463.23 C1470.63 1462.73 1473.92 1462.21 1477.19 1461.61 C1480.46 1461.01 1483.72 1460.36 1486.97 1459.64 C1490.22 1458.93 1493.45 1458.14 1496.67 1457.31 C1499.89 1456.49 1503.10 1455.60 1506.30 1454.68 C1509.50 1453.77 1512.69 1452.82 1515.86 1451.81 C1519.02 1450.79 1522.18 1449.75 1525.30 1448.61 C1528.41 1447.48 1531.50 1446.27 1534.55 1444.98 C1537.60 1443.68 1540.61 1442.29 1543.60 1440.84 C1546.59 1439.39 1549.53 1437.84 1552.47 1436.28 C1555.40 1434.71 1558.31 1433.08 1561.21 1431.45 C1564.12 1429.82 1567.00 1428.15 1569.89 1426.48 C1572.77 1424.80 1575.65 1423.12 1578.51 1421.42 C1581.38 1419.72 1584.25 1418.01 1587.09 1416.27 C1589.93 1414.53 1592.76 1412.79 1595.56 1410.98 C1598.35 1409.17 1601.12 1407.33 1603.84 1405.43 C1606.56 1403.52 1609.25 1401.56 1611.89 1399.55 C1614.54 1397.54 1617.15 1395.47 1619.73 1393.37 C1622.31 1391.27 1624.86 1389.13 1627.39 1386.95 C1629.91 1384.78 1632.40 1382.57 1634.86 1380.33 C1637.32 1378.08 1639.74 1375.80 1642.13 1373.48 C1644.51 1371.16 1646.86 1368.80 1649.18 1366.42 C1651.50 1364.03 1653.79 1361.61 1656.04 1359.15 C1658.30 1356.70 1660.52 1354.22 1662.70 1351.71 C1664.89 1349.19 1667.03 1346.65 1669.15 1344.08 C1671.26 1341.50 1673.34 1338.90 1675.39 1336.28 C1677.44 1333.65 1679.47 1331.00 1681.46 1328.33 C1683.45 1325.66 1685.42 1322.97 1687.36 1320.26 C1689.30 1317.55 1691.21 1314.82 1693.08 1312.07 C1694.96 1309.32 1696.82 1306.55 1698.63 1303.75 C1700.44 1300.96 1702.22 1298.14 1703.95 1295.30 C1705.68 1292.46 1707.38 1289.59 1709.02 1286.70 C1710.66 1283.80 1712.25 1280.88 1713.78 1277.93 C1715.31 1274.98 1716.79 1272.00 1718.20 1268.98 C1719.60 1265.97 1720.94 1262.93 1722.20 1259.86 C1723.46 1256.78 1724.64 1253.68 1725.75 1250.55 C1726.86 1247.42 1727.89 1244.26 1728.85 1241.08 C1729.81 1237.90 1730.68 1234.69 1731.51 1231.47 C1732.34 1228.25 1733.09 1225.01 1733.82 1221.76 C1734.55 1218.51 1735.22 1215.25 1735.89 1211.98 C1736.56 1208.72 1737.19 1205.44 1737.81 1202.17 C1738.44 1198.89 1739.04 1195.61 1739.64 1192.33 C1740.24 1189.05 1740.82 1185.77 1741.40 1182.49 C1741.98 1179.20 1742.55 1175.92 1743.10 1172.63 C1743.66 1169.34 1744.21 1166.05 1744.72 1162.76 C1745.24 1159.47 1745.74 1156.17 1746.20 1152.87 C1746.67 1149.57 1747.10 1146.27 1747.52 1142.96 C1747.93 1139.65 1748.32 1136.34 1748.69 1133.03 C1749.06 1129.72 1749.41 1126.40 1749.74 1123.09 C1750.07 1119.77 1750.38 1116.45 1750.64 1113.13 C1750.91 1109.81 1751.14 1106.49 1751.31 1103.17 C1751.49 1099.85 1751.61 1096.52 1751.67 1093.19 C1751.74 1089.87 1751.75 1086.54 1751.73 1083.21 C1751.71 1079.88 1751.64 1076.55 1751.54 1073.22 C1751.45 1069.88 1751.33 1066.55 1751.18 1063.22 C1751.04 1059.89 1750.87 1056.56 1750.68 1053.24 C1750.49 1049.91 1750.28 1046.58 1750.05 1043.25 C1749.82 1039.93 1749.57 1036.60 1749.30 1033.28 C1749.03 1029.96 1748.74 1026.64 1748.43 1023.32 C1748.12 1020.00 1747.78 1016.68 1747.42 1013.37 C1747.06 1010.06 1746.67 1006.75 1746.26 1003.44 C1745.85 1000.13 1745.41 996.83 1744.94 993.53 C1744.46 990.23 1743.96 986.94 1743.42 983.65 C1742.87 980.37 1742.29 977.08 1741.68 973.81 C1741.06 970.54 1740.41 967.27 1739.73 964.01 C1739.05 960.75 1738.33 957.49 1737.58 954.25 C1736.82 951.00 1736.02 947.77 1735.19 944.54 C1734.36 941.32 1733.48 938.11 1732.57 934.90 C1731.66 931.70 1730.71 928.50 1729.74 925.32 C1728.76 922.13 1727.76 918.95 1726.71 915.79 C1725.67 912.63 1724.60 909.47 1723.49 906.33 C1722.38 903.19 1721.23 900.06 1720.05 896.94 C1718.88 893.82 1717.68 890.72 1716.45 887.62 C1715.23 884.52 1713.98 881.43 1712.71 878.34 C1711.44 875.26 1710.15 872.19 1708.83 869.13 C1707.51 866.07 1706.17 863.02 1704.81 859.97 C1703.45 856.93 1702.07 853.89 1700.68 850.86 C1699.29 847.83 1697.88 844.81 1696.46 841.79 C1695.05 838.77 1693.62 835.76 1692.18 832.75 C1690.74 829.75 1689.29 826.74 1687.84 823.74 C1686.38 820.74 1684.91 817.75 1683.44 814.76 C1681.97 811.76 1680.49 808.77 1679.02 805.78 C1677.54 802.80 1676.06 799.81 1674.58 796.82 C1673.10 793.83 1671.62 790.84 1670.13 787.86 C1668.65 784.87 1667.17 781.88 1665.69 778.89 C1664.22 775.90 1662.74 772.92 1661.27 769.92 C1659.81 766.93 1658.35 763.93 1656.90 760.92 C1655.46 757.92 1654.03 754.91 1652.62 751.89 C1651.21 748.87 1649.81 745.84 1648.43 742.80 C1647.05 739.77 1645.68 736.73 1644.31 733.69 C1642.95 730.65 1641.59 727.60 1640.23 724.56 C1638.87 721.51 1637.51 718.47 1636.15 715.42 C1634.79 712.38 1633.42 709.34 1632.06 706.29 C1630.69 703.25 1629.33 700.21 1627.97 697.16 C1626.61 694.12 1625.25 691.07 1623.90 688.02 C1622.56 684.97 1621.22 681.92 1619.90 678.86 C1618.58 675.80 1617.28 672.73 1615.98 669.65 C1614.69 666.58 1613.42 663.50 1612.16 660.41 C1610.90 657.33 1609.65 654.23 1608.42 651.14 C1607.19 648.04 1605.98 644.93 1604.78 641.82 C1603.59 638.71 1602.42 635.59 1601.26 632.46 C1600.11 629.33 1598.97 626.20 1597.86 623.06 C1596.75 619.91 1595.66 616.77 1594.60 613.61 C1593.54 610.45 1592.50 607.28 1591.50 604.10 C1590.51 600.92 1589.55 597.73 1588.63 594.53 C1587.71 591.33 1586.83 588.12 1585.98 584.90 C1585.14 581.68 1584.33 578.45 1583.57 575.21 C1582.82 571.97 1582.09 568.72 1581.46 565.47 C1580.83 562.21 1580.26 558.94 1579.81 555.67 C1579.37 552.39 1579.03 549.10 1578.80 545.80 C1578.56 542.50 1578.46 539.19 1578.41 535.88 C1578.37 532.56 1578.43 529.23 1578.52 525.93 C1578.60 522.63 1578.77 519.41 1578.92 516.08 C1579.08 512.75 1579.23 509.30 1579.44 505.95 C1579.66 502.60 1579.96 499.30 1580.22 495.97 C1580.48 492.65 1580.87 490.33 1581.00 486.00 C1581.13 481.67 1581.00 472.67 1581.00 470.00 Z" fill="#000"/>
<g clip-path="url(#dc)">
<path d="M1260.50 470.00 C1260.50 472.67 1260.34 481.67 1260.50 486.00 C1260.66 490.33 1261.12 492.64 1261.43 495.96 C1261.75 499.28 1262.14 502.57 1262.37 505.92 C1262.59 509.27 1262.67 512.72 1262.80 516.05 C1262.92 519.38 1263.06 522.60 1263.11 525.90 C1263.16 529.20 1263.16 532.54 1263.08 535.85 C1262.99 539.17 1262.84 542.49 1262.61 545.80 C1262.37 549.11 1262.05 552.42 1261.66 555.71 C1261.28 559.01 1260.81 562.30 1260.31 565.59 C1259.81 568.88 1259.25 572.16 1258.67 575.44 C1258.09 578.72 1257.48 582.00 1256.82 585.26 C1256.17 588.53 1255.49 591.79 1254.76 595.03 C1254.02 598.28 1253.25 601.52 1252.42 604.74 C1251.60 607.97 1250.72 611.18 1249.81 614.39 C1248.90 617.59 1247.95 620.78 1246.96 623.96 C1245.97 627.14 1244.95 630.31 1243.88 633.46 C1242.81 636.62 1241.69 639.76 1240.55 642.88 C1239.40 646.01 1238.20 649.12 1236.99 652.22 C1235.77 655.32 1234.52 658.41 1233.26 661.50 C1232.00 664.58 1230.72 667.66 1229.42 670.73 C1228.13 673.81 1226.82 676.87 1225.49 679.93 C1224.17 682.99 1222.84 686.05 1221.49 689.10 C1220.14 692.15 1218.79 695.19 1217.42 698.23 C1216.05 701.27 1214.67 704.31 1213.27 707.34 C1211.87 710.36 1210.46 713.38 1209.03 716.39 C1207.60 719.41 1206.15 722.41 1204.69 725.41 C1203.23 728.40 1201.76 731.39 1200.28 734.38 C1198.80 737.37 1197.31 740.35 1195.82 743.34 C1194.34 746.32 1192.84 749.31 1191.36 752.29 C1189.87 755.27 1188.37 758.25 1186.88 761.24 C1185.40 764.22 1183.91 767.21 1182.42 770.19 C1180.94 773.18 1179.46 776.17 1178.00 779.16 C1176.53 782.16 1175.07 785.15 1173.63 788.16 C1172.19 791.17 1170.77 794.18 1169.36 797.20 C1167.95 800.23 1166.57 803.26 1165.18 806.29 C1163.80 809.33 1162.44 812.37 1161.07 815.41 C1159.70 818.45 1158.34 821.49 1156.97 824.53 C1155.60 827.57 1154.23 830.61 1152.86 833.65 C1151.48 836.69 1150.10 839.73 1148.72 842.76 C1147.34 845.80 1145.95 848.83 1144.58 851.87 C1143.21 854.91 1141.84 857.94 1140.49 860.99 C1139.14 864.04 1137.80 867.10 1136.49 870.16 C1135.18 873.22 1133.89 876.30 1132.62 879.38 C1131.35 882.46 1130.11 885.55 1128.88 888.66 C1127.66 891.76 1126.45 894.86 1125.28 897.98 C1124.11 901.10 1122.96 904.23 1121.86 907.37 C1120.75 910.51 1119.68 913.67 1118.64 916.84 C1117.61 920.00 1116.61 923.18 1115.64 926.37 C1114.67 929.56 1113.73 932.75 1112.83 935.96 C1111.93 939.17 1111.07 942.38 1110.24 945.61 C1109.42 948.84 1108.64 952.08 1107.90 955.32 C1107.15 958.57 1106.45 961.83 1105.78 965.09 C1105.11 968.35 1104.48 971.63 1103.88 974.90 C1103.27 978.18 1102.70 981.46 1102.17 984.75 C1101.63 988.04 1101.13 991.33 1100.66 994.63 C1100.20 997.93 1099.76 1001.24 1099.35 1004.54 C1098.94 1007.85 1098.56 1011.16 1098.20 1014.48 C1097.85 1017.79 1097.51 1021.11 1097.21 1024.43 C1096.90 1027.74 1096.63 1031.07 1096.37 1034.39 C1096.11 1037.71 1095.88 1041.04 1095.66 1044.37 C1095.44 1047.69 1095.24 1051.02 1095.05 1054.35 C1094.86 1057.68 1094.69 1061.01 1094.53 1064.34 C1094.37 1067.67 1094.21 1071.00 1094.09 1074.33 C1093.96 1077.66 1093.85 1080.99 1093.77 1084.32 C1093.70 1087.65 1093.64 1090.98 1093.64 1094.31 C1093.63 1097.65 1093.67 1100.98 1093.74 1104.30 C1093.82 1107.63 1093.95 1110.96 1094.09 1114.29 C1094.24 1117.62 1094.43 1120.95 1094.63 1124.27 C1094.83 1127.60 1095.05 1130.93 1095.30 1134.25 C1095.54 1137.57 1095.81 1140.90 1096.12 1144.21 C1096.42 1147.53 1096.76 1150.84 1097.15 1154.15 C1097.53 1157.46 1097.96 1160.76 1098.41 1164.06 C1098.87 1167.36 1099.37 1170.66 1099.88 1173.95 C1100.39 1177.24 1100.93 1180.54 1101.49 1183.82 C1102.06 1187.10 1102.64 1190.38 1103.28 1193.65 C1103.92 1196.91 1104.59 1200.17 1105.33 1203.42 C1106.07 1206.66 1106.87 1209.89 1107.72 1213.11 C1108.57 1216.32 1109.48 1219.52 1110.43 1222.72 C1111.37 1225.91 1112.37 1229.09 1113.39 1232.26 C1114.40 1235.43 1115.46 1238.60 1116.54 1241.74 C1117.63 1244.89 1118.74 1248.04 1119.90 1251.16 C1121.06 1254.28 1122.25 1257.39 1123.50 1260.47 C1124.75 1263.55 1126.05 1266.62 1127.41 1269.65 C1128.77 1272.69 1130.18 1275.70 1131.65 1278.69 C1133.12 1281.67 1134.65 1284.63 1136.23 1287.56 C1137.80 1290.49 1139.43 1293.39 1141.11 1296.27 C1142.78 1299.14 1144.51 1301.99 1146.28 1304.81 C1148.04 1307.64 1149.85 1310.43 1151.69 1313.21 C1153.54 1315.98 1155.42 1318.73 1157.34 1321.45 C1159.26 1324.17 1161.21 1326.87 1163.20 1329.54 C1165.19 1332.22 1167.21 1334.87 1169.26 1337.49 C1171.31 1340.12 1173.39 1342.72 1175.50 1345.29 C1177.61 1347.87 1179.76 1350.42 1181.93 1352.94 C1184.11 1355.46 1186.32 1357.96 1188.55 1360.43 C1190.79 1362.89 1193.06 1365.34 1195.35 1367.75 C1197.65 1370.15 1199.98 1372.54 1202.34 1374.88 C1204.71 1377.22 1207.11 1379.53 1209.54 1381.81 C1211.97 1384.08 1214.44 1386.32 1216.93 1388.52 C1219.43 1390.72 1221.95 1392.90 1224.51 1395.02 C1227.07 1397.14 1229.66 1399.23 1232.30 1401.25 C1234.93 1403.28 1237.61 1405.25 1240.32 1407.17 C1243.03 1409.08 1245.80 1410.93 1248.58 1412.75 C1251.36 1414.57 1254.19 1416.34 1257.02 1418.08 C1259.86 1419.83 1262.71 1421.54 1265.59 1423.20 C1268.47 1424.86 1271.37 1426.50 1274.31 1428.04 C1277.25 1429.58 1280.21 1431.06 1283.22 1432.44 C1286.23 1433.83 1289.29 1435.11 1292.37 1436.35 C1295.45 1437.59 1298.57 1438.73 1301.70 1439.87 C1304.83 1441.00 1307.98 1442.08 1311.13 1443.16 C1314.28 1444.25 1317.44 1445.32 1320.60 1446.38 C1323.76 1447.45 1326.92 1448.52 1330.08 1449.57 C1333.24 1450.62 1336.41 1451.67 1339.58 1452.68 C1342.75 1453.69 1345.93 1454.70 1349.12 1455.62 C1352.32 1456.55 1355.52 1457.43 1358.74 1458.23 C1361.97 1459.04 1365.21 1459.76 1368.47 1460.44 C1371.72 1461.12 1374.99 1461.71 1378.27 1462.30 C1381.55 1462.88 1384.84 1463.41 1388.13 1463.93 C1391.42 1464.44 1394.71 1464.94 1398.01 1465.39 C1401.30 1465.83 1404.60 1466.26 1407.90 1466.58 C1411.19 1466.90 1414.49 1467.16 1417.79 1467.29 C1421.09 1467.42 1424.40 1467.44 1427.70 1467.36 C1431.00 1467.27 1434.31 1467.06 1437.61 1466.80 C1440.92 1466.54 1444.23 1466.18 1447.53 1465.82 C1450.84 1465.46 1454.15 1465.04 1457.45 1464.61 C1460.75 1464.18 1464.05 1463.73 1467.34 1463.23 C1470.63 1462.73 1473.92 1462.21 1477.19 1461.61 C1480.46 1461.01 1483.72 1460.36 1486.97 1459.64 C1490.22 1458.93 1493.45 1458.14 1496.67 1457.31 C1499.89 1456.49 1503.10 1455.60 1506.30 1454.68 C1509.50 1453.77 1512.69 1452.82 1515.86 1451.81 C1519.02 1450.79 1522.18 1449.75 1525.30 1448.61 C1528.41 1447.48 1531.50 1446.27 1534.55 1444.98 C1537.60 1443.68 1540.61 1442.29 1543.60 1440.84 C1546.59 1439.39 1549.53 1437.84 1552.47 1436.28 C1555.40 1434.71 1558.31 1433.08 1561.21 1431.45 C1564.12 1429.82 1567.00 1428.15 1569.89 1426.48 C1572.77 1424.80 1575.65 1423.12 1578.51 1421.42 C1581.38 1419.72 1584.25 1418.01 1587.09 1416.27 C1589.93 1414.53 1592.76 1412.79 1595.56 1410.98 C1598.35 1409.17 1601.12 1407.33 1603.84 1405.43 C1606.56 1403.52 1609.25 1401.56 1611.89 1399.55 C1614.54 1397.54 1617.15 1395.47 1619.73 1393.37 C1622.31 1391.27 1624.86 1389.13 1627.39 1386.95 C1629.91 1384.78 1632.40 1382.57 1634.86 1380.33 C1637.32 1378.08 1639.74 1375.80 1642.13 1373.48 C1644.51 1371.16 1646.86 1368.80 1649.18 1366.42 C1651.50 1364.03 1653.79 1361.61 1656.04 1359.15 C1658.30 1356.70 1660.52 1354.22 1662.70 1351.71 C1664.89 1349.19 1667.03 1346.65 1669.15 1344.08 C1671.26 1341.50 1673.34 1338.90 1675.39 1336.28 C1677.44 1333.65 1679.47 1331.00 1681.46 1328.33 C1683.45 1325.66 1685.42 1322.97 1687.36 1320.26 C1689.30 1317.55 1691.21 1314.82 1693.08 1312.07 C1694.96 1309.32 1696.82 1306.55 1698.63 1303.75 C1700.44 1300.96 1702.22 1298.14 1703.95 1295.30 C1705.68 1292.46 1707.38 1289.59 1709.02 1286.70 C1710.66 1283.80 1712.25 1280.88 1713.78 1277.93 C1715.31 1274.98 1716.79 1272.00 1718.20 1268.98 C1719.60 1265.97 1720.94 1262.93 1722.20 1259.86 C1723.46 1256.78 1724.64 1253.68 1725.75 1250.55 C1726.86 1247.42 1727.89 1244.26 1728.85 1241.08 C1729.81 1237.90 1730.68 1234.69 1731.51 1231.47 C1732.34 1228.25 1733.09 1225.01 1733.82 1221.76 C1734.55 1218.51 1735.22 1215.25 1735.89 1211.98 C1736.56 1208.72 1737.19 1205.44 1737.81 1202.17 C1738.44 1198.89 1739.04 1195.61 1739.64 1192.33 C1740.24 1189.05 1740.82 1185.77 1741.40 1182.49 C1741.98 1179.20 1742.55 1175.92 1743.10 1172.63 C1743.66 1169.34 1744.21 1166.05 1744.72 1162.76 C1745.24 1159.47 1745.74 1156.17 1746.20 1152.87 C1746.67 1149.57 1747.10 1146.27 1747.52 1142.96 C1747.93 1139.65 1748.32 1136.34 1748.69 1133.03 C1749.06 1129.72 1749.41 1126.40 1749.74 1123.09 C1750.07 1119.77 1750.38 1116.45 1750.64 1113.13 C1750.91 1109.81 1751.14 1106.49 1751.31 1103.17 C1751.49 1099.85 1751.61 1096.52 1751.67 1093.19 C1751.74 1089.87 1751.75 1086.54 1751.73 1083.21 C1751.71 1079.88 1751.64 1076.55 1751.54 1073.22 C1751.45 1069.88 1751.33 1066.55 1751.18 1063.22 C1751.04 1059.89 1750.87 1056.56 1750.68 1053.24 C1750.49 1049.91 1750.28 1046.58 1750.05 1043.25 C1749.82 1039.93 1749.57 1036.60 1749.30 1033.28 C1749.03 1029.96 1748.74 1026.64 1748.43 1023.32 C1748.12 1020.00 1747.78 1016.68 1747.42 1013.37 C1747.06 1010.06 1746.67 1006.75 1746.26 1003.44 C1745.85 1000.13 1745.41 996.83 1744.94 993.53 C1744.46 990.23 1743.96 986.94 1743.42 983.65 C1742.87 980.37 1742.29 977.08 1741.68 973.81 C1741.06 970.54 1740.41 967.27 1739.73 964.01 C1739.05 960.75 1738.33 957.49 1737.58 954.25 C1736.82 951.00 1736.02 947.77 1735.19 944.54 C1734.36 941.32 1733.48 938.11 1732.57 934.90 C1731.66 931.70 1730.71 928.50 1729.74 925.32 C1728.76 922.13 1727.76 918.95 1726.71 915.79 C1725.67 912.63 1724.60 909.47 1723.49 906.33 C1722.38 903.19 1721.23 900.06 1720.05 896.94 C1718.88 893.82 1717.68 890.72 1716.45 887.62 C1715.23 884.52 1713.98 881.43 1712.71 878.34 C1711.44 875.26 1710.15 872.19 1708.83 869.13 C1707.51 866.07 1706.17 863.02 1704.81 859.97 C1703.45 856.93 1702.07 853.89 1700.68 850.86 C1699.29 847.83 1697.88 844.81 1696.46 841.79 C1695.05 838.77 1693.62 835.76 1692.18 832.75 C1690.74 829.75 1689.29 826.74 1687.84 823.74 C1686.38 820.74 1684.91 817.75 1683.44 814.76 C1681.97 811.76 1680.49 808.77 1679.02 805.78 C1677.54 802.80 1676.06 799.81 1674.58 796.82 C1673.10 793.83 1671.62 790.84 1670.13 787.86 C1668.65 784.87 1667.17 781.88 1665.69 778.89 C1664.22 775.90 1662.74 772.92 1661.27 769.92 C1659.81 766.93 1658.35 763.93 1656.90 760.92 C1655.46 757.92 1654.03 754.91 1652.62 751.89 C1651.21 748.87 1649.81 745.84 1648.43 742.80 C1647.05 739.77 1645.68 736.73 1644.31 733.69 C1642.95 730.65 1641.59 727.60 1640.23 724.56 C1638.87 721.51 1637.51 718.47 1636.15 715.42 C1634.79 712.38 1633.42 709.34 1632.06 706.29 C1630.69 703.25 1629.33 700.21 1627.97 697.16 C1626.61 694.12 1625.25 691.07 1623.90 688.02 C1622.56 684.97 1621.22 681.92 1619.90 678.86 C1618.58 675.80 1617.28 672.73 1615.98 669.65 C1614.69 666.58 1613.42 663.50 1612.16 660.41 C1610.90 657.33 1609.65 654.23 1608.42 651.14 C1607.19 648.04 1605.98 644.93 1604.78 641.82 C1603.59 638.71 1602.42 635.59 1601.26 632.46 C1600.11 629.33 1598.97 626.20 1597.86 623.06 C1596.75 619.91 1595.66 616.77 1594.60 613.61 C1593.54 610.45 1592.50 607.28 1591.50 604.10 C1590.51 600.92 1589.55 597.73 1588.63 594.53 C1587.71 591.33 1586.83 588.12 1585.98 584.90 C1585.14 581.68 1584.33 578.45 1583.57 575.21 C1582.82 571.97 1582.09 568.72 1581.46 565.47 C1580.83 562.21 1580.26 558.94 1579.81 555.67 C1579.37 552.39 1579.03 549.10 1578.80 545.80 C1578.56 542.50 1578.46 539.19 1578.41 535.88 C1578.37 532.56 1578.43 529.23 1578.52 525.93 C1578.60 522.63 1578.77 519.41 1578.92 516.08 C1579.08 512.75 1579.23 509.30 1579.44 505.95 C1579.66 502.60 1579.96 499.30 1580.22 495.97 C1580.48 492.65 1580.87 490.33 1581.00 486.00 C1581.13 481.67 1581.00 472.67 1581.00 470.00 Z" fill="none" stroke="#0a0a0a" stroke-width="64"/>
<path d="M1260.50 470.00 C1260.50 472.67 1260.34 481.67 1260.50 486.00 C1260.66 490.33 1261.12 492.64 1261.43 495.96 C1261.75 499.28 1262.14 502.57 1262.37 505.92 C1262.59 509.27 1262.67 512.72 1262.80 516.05 C1262.92 519.38 1263.06 522.60 1263.11 525.90 C1263.16 529.20 1263.16 532.54 1263.08 535.85 C1262.99 539.17 1262.84 542.49 1262.61 545.80 C1262.37 549.11 1262.05 552.42 1261.66 555.71 C1261.28 559.01 1260.81 562.30 1260.31 565.59 C1259.81 568.88 1259.25 572.16 1258.67 575.44 C1258.09 578.72 1257.48 582.00 1256.82 585.26 C1256.17 588.53 1255.49 591.79 1254.76 595.03 C1254.02 598.28 1253.25 601.52 1252.42 604.74 C1251.60 607.97 1250.72 611.18 1249.81 614.39 C1248.90 617.59 1247.95 620.78 1246.96 623.96 C1245.97 627.14 1244.95 630.31 1243.88 633.46 C1242.81 636.62 1241.69 639.76 1240.55 642.88 C1239.40 646.01 1238.20 649.12 1236.99 652.22 C1235.77 655.32 1234.52 658.41 1233.26 661.50 C1232.00 664.58 1230.72 667.66 1229.42 670.73 C1228.13 673.81 1226.82 676.87 1225.49 679.93 C1224.17 682.99 1222.84 686.05 1221.49 689.10 C1220.14 692.15 1218.79 695.19 1217.42 698.23 C1216.05 701.27 1214.67 704.31 1213.27 707.34 C1211.87 710.36 1210.46 713.38 1209.03 716.39 C1207.60 719.41 1206.15 722.41 1204.69 725.41 C1203.23 728.40 1201.76 731.39 1200.28 734.38 C1198.80 737.37 1197.31 740.35 1195.82 743.34 C1194.34 746.32 1192.84 749.31 1191.36 752.29 C1189.87 755.27 1188.37 758.25 1186.88 761.24 C1185.40 764.22 1183.91 767.21 1182.42 770.19 C1180.94 773.18 1179.46 776.17 1178.00 779.16 C1176.53 782.16 1175.07 785.15 1173.63 788.16 C1172.19 791.17 1170.77 794.18 1169.36 797.20 C1167.95 800.23 1166.57 803.26 1165.18 806.29 C1163.80 809.33 1162.44 812.37 1161.07 815.41 C1159.70 818.45 1158.34 821.49 1156.97 824.53 C1155.60 827.57 1154.23 830.61 1152.86 833.65 C1151.48 836.69 1150.10 839.73 1148.72 842.76 C1147.34 845.80 1145.95 848.83 1144.58 851.87 C1143.21 854.91 1141.84 857.94 1140.49 860.99 C1139.14 864.04 1137.80 867.10 1136.49 870.16 C1135.18 873.22 1133.89 876.30 1132.62 879.38 C1131.35 882.46 1130.11 885.55 1128.88 888.66 C1127.66 891.76 1126.45 894.86 1125.28 897.98 C1124.11 901.10 1122.96 904.23 1121.86 907.37 C1120.75 910.51 1119.68 913.67 1118.64 916.84 C1117.61 920.00 1116.61 923.18 1115.64 926.37 C1114.67 929.56 1113.73 932.75 1112.83 935.96 C1111.93 939.17 1111.07 942.38 1110.24 945.61 C1109.42 948.84 1108.64 952.08 1107.90 955.32 C1107.15 958.57 1106.45 961.83 1105.78 965.09 C1105.11 968.35 1104.48 971.63 1103.88 974.90 C1103.27 978.18 1102.70 981.46 1102.17 984.75 C1101.63 988.04 1101.13 991.33 1100.66 994.63 C1100.20 997.93 1099.76 1001.24 1099.35 1004.54 C1098.94 1007.85 1098.56 1011.16 1098.20 1014.48 C1097.85 1017.79 1097.51 1021.11 1097.21 1024.43 C1096.90 1027.74 1096.63 1031.07 1096.37 1034.39 C1096.11 1037.71 1095.88 1041.04 1095.66 1044.37 C1095.44 1047.69 1095.24 1051.02 1095.05 1054.35 C1094.86 1057.68 1094.69 1061.01 1094.53 1064.34 C1094.37 1067.67 1094.21 1071.00 1094.09 1074.33 C1093.96 1077.66 1093.85 1080.99 1093.77 1084.32 C1093.70 1087.65 1093.64 1090.98 1093.64 1094.31 C1093.63 1097.65 1093.67 1100.98 1093.74 1104.30 C1093.82 1107.63 1093.95 1110.96 1094.09 1114.29 C1094.24 1117.62 1094.43 1120.95 1094.63 1124.27 C1094.83 1127.60 1095.05 1130.93 1095.30 1134.25 C1095.54 1137.57 1095.81 1140.90 1096.12 1144.21 C1096.42 1147.53 1096.76 1150.84 1097.15 1154.15 C1097.53 1157.46 1097.96 1160.76 1098.41 1164.06 C1098.87 1167.36 1099.37 1170.66 1099.88 1173.95 C1100.39 1177.24 1100.93 1180.54 1101.49 1183.82 C1102.06 1187.10 1102.64 1190.38 1103.28 1193.65 C1103.92 1196.91 1104.59 1200.17 1105.33 1203.42 C1106.07 1206.66 1106.87 1209.89 1107.72 1213.11 C1108.57 1216.32 1109.48 1219.52 1110.43 1222.72 C1111.37 1225.91 1112.37 1229.09 1113.39 1232.26 C1114.40 1235.43 1115.46 1238.60 1116.54 1241.74 C1117.63 1244.89 1118.74 1248.04 1119.90 1251.16 C1121.06 1254.28 1122.25 1257.39 1123.50 1260.47 C1124.75 1263.55 1126.05 1266.62 1127.41 1269.65 C1128.77 1272.69 1130.18 1275.70 1131.65 1278.69 C1133.12 1281.67 1134.65 1284.63 1136.23 1287.56 C1137.80 1290.49 1139.43 1293.39 1141.11 1296.27 C1142.78 1299.14 1144.51 1301.99 1146.28 1304.81 C1148.04 1307.64 1149.85 1310.43 1151.69 1313.21 C1153.54 1315.98 1155.42 1318.73 1157.34 1321.45 C1159.26 1324.17 1161.21 1326.87 1163.20 1329.54 C1165.19 1332.22 1167.21 1334.87 1169.26 1337.49 C1171.31 1340.12 1173.39 1342.72 1175.50 1345.29 C1177.61 1347.87 1179.76 1350.42 1181.93 1352.94 C1184.11 1355.46 1186.32 1357.96 1188.55 1360.43 C1190.79 1362.89 1193.06 1365.34 1195.35 1367.75 C1197.65 1370.15 1199.98 1372.54 1202.34 1374.88 C1204.71 1377.22 1207.11 1379.53 1209.54 1381.81 C1211.97 1384.08 1214.44 1386.32 1216.93 1388.52 C1219.43 1390.72 1221.95 1392.90 1224.51 1395.02 C1227.07 1397.14 1229.66 1399.23 1232.30 1401.25 C1234.93 1403.28 1237.61 1405.25 1240.32 1407.17 C1243.03 1409.08 1245.80 1410.93 1248.58 1412.75 C1251.36 1414.57 1254.19 1416.34 1257.02 1418.08 C1259.86 1419.83 1262.71 1421.54 1265.59 1423.20 C1268.47 1424.86 1271.37 1426.50 1274.31 1428.04 C1277.25 1429.58 1280.21 1431.06 1283.22 1432.44 C1286.23 1433.83 1289.29 1435.11 1292.37 1436.35 C1295.45 1437.59 1298.57 1438.73 1301.70 1439.87 C1304.83 1441.00 1307.98 1442.08 1311.13 1443.16 C1314.28 1444.25 1317.44 1445.32 1320.60 1446.38 C1323.76 1447.45 1326.92 1448.52 1330.08 1449.57 C1333.24 1450.62 1336.41 1451.67 1339.58 1452.68 C1342.75 1453.69 1345.93 1454.70 1349.12 1455.62 C1352.32 1456.55 1355.52 1457.43 1358.74 1458.23 C1361.97 1459.04 1365.21 1459.76 1368.47 1460.44 C1371.72 1461.12 1374.99 1461.71 1378.27 1462.30 C1381.55 1462.88 1384.84 1463.41 1388.13 1463.93 C1391.42 1464.44 1394.71 1464.94 1398.01 1465.39 C1401.30 1465.83 1404.60 1466.26 1407.90 1466.58 C1411.19 1466.90 1414.49 1467.16 1417.79 1467.29 C1421.09 1467.42 1424.40 1467.44 1427.70 1467.36 C1431.00 1467.27 1434.31 1467.06 1437.61 1466.80 C1440.92 1466.54 1444.23 1466.18 1447.53 1465.82 C1450.84 1465.46 1454.15 1465.04 1457.45 1464.61 C1460.75 1464.18 1464.05 1463.73 1467.34 1463.23 C1470.63 1462.73 1473.92 1462.21 1477.19 1461.61 C1480.46 1461.01 1483.72 1460.36 1486.97 1459.64 C1490.22 1458.93 1493.45 1458.14 1496.67 1457.31 C1499.89 1456.49 1503.10 1455.60 1506.30 1454.68 C1509.50 1453.77 1512.69 1452.82 1515.86 1451.81 C1519.02 1450.79 1522.18 1449.75 1525.30 1448.61 C1528.41 1447.48 1531.50 1446.27 1534.55 1444.98 C1537.60 1443.68 1540.61 1442.29 1543.60 1440.84 C1546.59 1439.39 1549.53 1437.84 1552.47 1436.28 C1555.40 1434.71 1558.31 1433.08 1561.21 1431.45 C1564.12 1429.82 1567.00 1428.15 1569.89 1426.48 C1572.77 1424.80 1575.65 1423.12 1578.51 1421.42 C1581.38 1419.72 1584.25 1418.01 1587.09 1416.27 C1589.93 1414.53 1592.76 1412.79 1595.56 1410.98 C1598.35 1409.17 1601.12 1407.33 1603.84 1405.43 C1606.56 1403.52 1609.25 1401.56 1611.89 1399.55 C1614.54 1397.54 1617.15 1395.47 1619.73 1393.37 C1622.31 1391.27 1624.86 1389.13 1627.39 1386.95 C1629.91 1384.78 1632.40 1382.57 1634.86 1380.33 C1637.32 1378.08 1639.74 1375.80 1642.13 1373.48 C1644.51 1371.16 1646.86 1368.80 1649.18 1366.42 C1651.50 1364.03 1653.79 1361.61 1656.04 1359.15 C1658.30 1356.70 1660.52 1354.22 1662.70 1351.71 C1664.89 1349.19 1667.03 1346.65 1669.15 1344.08 C1671.26 1341.50 1673.34 1338.90 1675.39 1336.28 C1677.44 1333.65 1679.47 1331.00 1681.46 1328.33 C1683.45 1325.66 1685.42 1322.97 1687.36 1320.26 C1689.30 1317.55 1691.21 1314.82 1693.08 1312.07 C1694.96 1309.32 1696.82 1306.55 1698.63 1303.75 C1700.44 1300.96 1702.22 1298.14 1703.95 1295.30 C1705.68 1292.46 1707.38 1289.59 1709.02 1286.70 C1710.66 1283.80 1712.25 1280.88 1713.78 1277.93 C1715.31 1274.98 1716.79 1272.00 1718.20 1268.98 C1719.60 1265.97 1720.94 1262.93 1722.20 1259.86 C1723.46 1256.78 1724.64 1253.68 1725.75 1250.55 C1726.86 1247.42 1727.89 1244.26 1728.85 1241.08 C1729.81 1237.90 1730.68 1234.69 1731.51 1231.47 C1732.34 1228.25 1733.09 1225.01 1733.82 1221.76 C1734.55 1218.51 1735.22 1215.25 1735.89 1211.98 C1736.56 1208.72 1737.19 1205.44 1737.81 1202.17 C1738.44 1198.89 1739.04 1195.61 1739.64 1192.33 C1740.24 1189.05 1740.82 1185.77 1741.40 1182.49 C1741.98 1179.20 1742.55 1175.92 1743.10 1172.63 C1743.66 1169.34 1744.21 1166.05 1744.72 1162.76 C1745.24 1159.47 1745.74 1156.17 1746.20 1152.87 C1746.67 1149.57 1747.10 1146.27 1747.52 1142.96 C1747.93 1139.65 1748.32 1136.34 1748.69 1133.03 C1749.06 1129.72 1749.41 1126.40 1749.74 1123.09 C1750.07 1119.77 1750.38 1116.45 1750.64 1113.13 C1750.91 1109.81 1751.14 1106.49 1751.31 1103.17 C1751.49 1099.85 1751.61 1096.52 1751.67 1093.19 C1751.74 1089.87 1751.75 1086.54 1751.73 1083.21 C1751.71 1079.88 1751.64 1076.55 1751.54 1073.22 C1751.45 1069.88 1751.33 1066.55 1751.18 1063.22 C1751.04 1059.89 1750.87 1056.56 1750.68 1053.24 C1750.49 1049.91 1750.28 1046.58 1750.05 1043.25 C1749.82 1039.93 1749.57 1036.60 1749.30 1033.28 C1749.03 1029.96 1748.74 1026.64 1748.43 1023.32 C1748.12 1020.00 1747.78 1016.68 1747.42 1013.37 C1747.06 1010.06 1746.67 1006.75 1746.26 1003.44 C1745.85 1000.13 1745.41 996.83 1744.94 993.53 C1744.46 990.23 1743.96 986.94 1743.42 983.65 C1742.87 980.37 1742.29 977.08 1741.68 973.81 C1741.06 970.54 1740.41 967.27 1739.73 964.01 C1739.05 960.75 1738.33 957.49 1737.58 954.25 C1736.82 951.00 1736.02 947.77 1735.19 944.54 C1734.36 941.32 1733.48 938.11 1732.57 934.90 C1731.66 931.70 1730.71 928.50 1729.74 925.32 C1728.76 922.13 1727.76 918.95 1726.71 915.79 C1725.67 912.63 1724.60 909.47 1723.49 906.33 C1722.38 903.19 1721.23 900.06 1720.05 896.94 C1718.88 893.82 1717.68 890.72 1716.45 887.62 C1715.23 884.52 1713.98 881.43 1712.71 878.34 C1711.44 875.26 1710.15 872.19 1708.83 869.13 C1707.51 866.07 1706.17 863.02 1704.81 859.97 C1703.45 856.93 1702.07 853.89 1700.68 850.86 C1699.29 847.83 1697.88 844.81 1696.46 841.79 C1695.05 838.77 1693.62 835.76 1692.18 832.75 C1690.74 829.75 1689.29 826.74 1687.84 823.74 C1686.38 820.74 1684.91 817.75 1683.44 814.76 C1681.97 811.76 1680.49 808.77 1679.02 805.78 C1677.54 802.80 1676.06 799.81 1674.58 796.82 C1673.10 793.83 1671.62 790.84 1670.13 787.86 C1668.65 784.87 1667.17 781.88 1665.69 778.89 C1664.22 775.90 1662.74 772.92 1661.27 769.92 C1659.81 766.93 1658.35 763.93 1656.90 760.92 C1655.46 757.92 1654.03 754.91 1652.62 751.89 C1651.21 748.87 1649.81 745.84 1648.43 742.80 C1647.05 739.77 1645.68 736.73 1644.31 733.69 C1642.95 730.65 1641.59 727.60 1640.23 724.56 C1638.87 721.51 1637.51 718.47 1636.15 715.42 C1634.79 712.38 1633.42 709.34 1632.06 706.29 C1630.69 703.25 1629.33 700.21 1627.97 697.16 C1626.61 694.12 1625.25 691.07 1623.90 688.02 C1622.56 684.97 1621.22 681.92 1619.90 678.86 C1618.58 675.80 1617.28 672.73 1615.98 669.65 C1614.69 666.58 1613.42 663.50 1612.16 660.41 C1610.90 657.33 1609.65 654.23 1608.42 651.14 C1607.19 648.04 1605.98 644.93 1604.78 641.82 C1603.59 638.71 1602.42 635.59 1601.26 632.46 C1600.11 629.33 1598.97 626.20 1597.86 623.06 C1596.75 619.91 1595.66 616.77 1594.60 613.61 C1593.54 610.45 1592.50 607.28 1591.50 604.10 C1590.51 600.92 1589.55 597.73 1588.63 594.53 C1587.71 591.33 1586.83 588.12 1585.98 584.90 C1585.14 581.68 1584.33 578.45 1583.57 575.21 C1582.82 571.97 1582.09 568.72 1581.46 565.47 C1580.83 562.21 1580.26 558.94 1579.81 555.67 C1579.37 552.39 1579.03 549.10 1578.80 545.80 C1578.56 542.50 1578.46 539.19 1578.41 535.88 C1578.37 532.56 1578.43 529.23 1578.52 525.93 C1578.60 522.63 1578.77 519.41 1578.92 516.08 C1579.08 512.75 1579.23 509.30 1579.44 505.95 C1579.66 502.60 1579.96 499.30 1580.22 495.97 C1580.48 492.65 1580.87 490.33 1581.00 486.00 C1581.13 481.67 1581.00 472.67 1581.00 470.00 Z" fill="none" stroke="#121212" stroke-width="20"/>
<rect x="1262" y="486" width="318" height="72" fill="url(#ndl)"/>
<ellipse cx="1416" cy="566" rx="40" ry="16" fill="url(#nh)"/>
<rect x="1262" y="553" width="318" height="6" fill="#080808"/>
<ellipse cx="1419" cy="1132" rx="122" ry="156" fill="url(#hl)"/>
<path d="M1108 990 C1100 1040 1100 1110 1106 1170 C1110 1210 1118 1240 1128 1265" fill="none" stroke="#3a3a3a" stroke-width="9" filter="url(#bl4)" opacity="0.8"/>
<ellipse cx="1117" cy="1100" rx="4" ry="26" fill="url(#sp)"/>
<path d="M1676 1326 C1655 1362 1620 1396 1556 1424" fill="none" stroke="#6a6a6a" stroke-width="8" filter="url(#bl3)" opacity="0.9"/>
<path d="M1560 625 C1590 700 1640 800 1690 880" fill="none" stroke="#333" stroke-width="8" filter="url(#bl4)" opacity="0.7"/>
<path d="M1260.50 470.00 C1260.50 472.67 1260.34 481.67 1260.50 486.00 C1260.66 490.33 1261.12 492.64 1261.43 495.96 C1261.75 499.28 1262.14 502.57 1262.37 505.92 C1262.59 509.27 1262.67 512.72 1262.80 516.05 C1262.92 519.38 1263.06 522.60 1263.11 525.90 C1263.16 529.20 1263.16 532.54 1263.08 535.85 C1262.99 539.17 1262.84 542.49 1262.61 545.80 C1262.37 549.11 1262.05 552.42 1261.66 555.71 C1261.28 559.01 1260.81 562.30 1260.31 565.59 C1259.81 568.88 1259.25 572.16 1258.67 575.44 C1258.09 578.72 1257.48 582.00 1256.82 585.26 C1256.17 588.53 1255.49 591.79 1254.76 595.03 C1254.02 598.28 1253.25 601.52 1252.42 604.74 C1251.60 607.97 1250.72 611.18 1249.81 614.39 C1248.90 617.59 1247.95 620.78 1246.96 623.96 C1245.97 627.14 1244.95 630.31 1243.88 633.46 C1242.81 636.62 1241.69 639.76 1240.55 642.88 C1239.40 646.01 1238.20 649.12 1236.99 652.22 C1235.77 655.32 1234.52 658.41 1233.26 661.50 C1232.00 664.58 1230.72 667.66 1229.42 670.73 C1228.13 673.81 1226.82 676.87 1225.49 679.93 C1224.17 682.99 1222.84 686.05 1221.49 689.10 C1220.14 692.15 1218.79 695.19 1217.42 698.23 C1216.05 701.27 1214.67 704.31 1213.27 707.34 C1211.87 710.36 1210.46 713.38 1209.03 716.39 C1207.60 719.41 1206.15 722.41 1204.69 725.41 C1203.23 728.40 1201.76 731.39 1200.28 734.38 C1198.80 737.37 1197.31 740.35 1195.82 743.34 C1194.34 746.32 1192.84 749.31 1191.36 752.29 C1189.87 755.27 1188.37 758.25 1186.88 761.24 C1185.40 764.22 1183.91 767.21 1182.42 770.19 C1180.94 773.18 1179.46 776.17 1178.00 779.16 C1176.53 782.16 1175.07 785.15 1173.63 788.16 C1172.19 791.17 1170.77 794.18 1169.36 797.20 C1167.95 800.23 1166.57 803.26 1165.18 806.29 C1163.80 809.33 1162.44 812.37 1161.07 815.41 C1159.70 818.45 1158.34 821.49 1156.97 824.53 C1155.60 827.57 1154.23 830.61 1152.86 833.65 C1151.48 836.69 1150.10 839.73 1148.72 842.76 C1147.34 845.80 1145.95 848.83 1144.58 851.87 C1143.21 854.91 1141.84 857.94 1140.49 860.99 C1139.14 864.04 1137.80 867.10 1136.49 870.16 C1135.18 873.22 1133.89 876.30 1132.62 879.38 C1131.35 882.46 1130.11 885.55 1128.88 888.66 C1127.66 891.76 1126.45 894.86 1125.28 897.98 C1124.11 901.10 1122.96 904.23 1121.86 907.37 C1120.75 910.51 1119.68 913.67 1118.64 916.84 C1117.61 920.00 1116.61 923.18 1115.64 926.37 C1114.67 929.56 1113.73 932.75 1112.83 935.96 C1111.93 939.17 1111.07 942.38 1110.24 945.61 C1109.42 948.84 1108.64 952.08 1107.90 955.32 C1107.15 958.57 1106.45 961.83 1105.78 965.09 C1105.11 968.35 1104.48 971.63 1103.88 974.90 C1103.27 978.18 1102.70 981.46 1102.17 984.75 C1101.63 988.04 1101.13 991.33 1100.66 994.63 C1100.20 997.93 1099.76 1001.24 1099.35 1004.54 C1098.94 1007.85 1098.56 1011.16 1098.20 1014.48 C1097.85 1017.79 1097.51 1021.11 1097.21 1024.43 C1096.90 1027.74 1096.63 1031.07 1096.37 1034.39 C1096.11 1037.71 1095.88 1041.04 1095.66 1044.37 C1095.44 1047.69 1095.24 1051.02 1095.05 1054.35 C1094.86 1057.68 1094.69 1061.01 1094.53 1064.34 C1094.37 1067.67 1094.21 1071.00 1094.09 1074.33 C1093.96 1077.66 1093.85 1080.99 1093.77 1084.32 C1093.70 1087.65 1093.64 1090.98 1093.64 1094.31 C1093.63 1097.65 1093.67 1100.98 1093.74 1104.30 C1093.82 1107.63 1093.95 1110.96 1094.09 1114.29 C1094.24 1117.62 1094.43 1120.95 1094.63 1124.27 C1094.83 1127.60 1095.05 1130.93 1095.30 1134.25 C1095.54 1137.57 1095.81 1140.90 1096.12 1144.21 C1096.42 1147.53 1096.76 1150.84 1097.15 1154.15 C1097.53 1157.46 1097.96 1160.76 1098.41 1164.06 C1098.87 1167.36 1099.37 1170.66 1099.88 1173.95 C1100.39 1177.24 1100.93 1180.54 1101.49 1183.82 C1102.06 1187.10 1102.64 1190.38 1103.28 1193.65 C1103.92 1196.91 1104.59 1200.17 1105.33 1203.42 C1106.07 1206.66 1106.87 1209.89 1107.72 1213.11 C1108.57 1216.32 1109.48 1219.52 1110.43 1222.72 C1111.37 1225.91 1112.37 1229.09 1113.39 1232.26 C1114.40 1235.43 1115.46 1238.60 1116.54 1241.74 C1117.63 1244.89 1118.74 1248.04 1119.90 1251.16 C1121.06 1254.28 1122.25 1257.39 1123.50 1260.47 C1124.75 1263.55 1126.05 1266.62 1127.41 1269.65 C1128.77 1272.69 1130.18 1275.70 1131.65 1278.69 C1133.12 1281.67 1134.65 1284.63 1136.23 1287.56 C1137.80 1290.49 1139.43 1293.39 1141.11 1296.27 C1142.78 1299.14 1144.51 1301.99 1146.28 1304.81 C1148.04 1307.64 1149.85 1310.43 1151.69 1313.21 C1153.54 1315.98 1155.42 1318.73 1157.34 1321.45 C1159.26 1324.17 1161.21 1326.87 1163.20 1329.54 C1165.19 1332.22 1167.21 1334.87 1169.26 1337.49 C1171.31 1340.12 1173.39 1342.72 1175.50 1345.29 C1177.61 1347.87 1179.76 1350.42 1181.93 1352.94 C1184.11 1355.46 1186.32 1357.96 1188.55 1360.43 C1190.79 1362.89 1193.06 1365.34 1195.35 1367.75 C1197.65 1370.15 1199.98 1372.54 1202.34 1374.88 C1204.71 1377.22 1207.11 1379.53 1209.54 1381.81 C1211.97 1384.08 1214.44 1386.32 1216.93 1388.52 C1219.43 1390.72 1221.95 1392.90 1224.51 1395.02 C1227.07 1397.14 1229.66 1399.23 1232.30 1401.25 C1234.93 1403.28 1237.61 1405.25 1240.32 1407.17 C1243.03 1409.08 1245.80 1410.93 1248.58 1412.75 C1251.36 1414.57 1254.19 1416.34 1257.02 1418.08 C1259.86 1419.83 1262.71 1421.54 1265.59 1423.20 C1268.47 1424.86 1271.37 1426.50 1274.31 1428.04 C1277.25 1429.58 1280.21 1431.06 1283.22 1432.44 C1286.23 1433.83 1289.29 1435.11 1292.37 1436.35 C1295.45 1437.59 1298.57 1438.73 1301.70 1439.87 C1304.83 1441.00 1307.98 1442.08 1311.13 1443.16 C1314.28 1444.25 1317.44 1445.32 1320.60 1446.38 C1323.76 1447.45 1326.92 1448.52 1330.08 1449.57 C1333.24 1450.62 1336.41 1451.67 1339.58 1452.68 C1342.75 1453.69 1345.93 1454.70 1349.12 1455.62 C1352.32 1456.55 1355.52 1457.43 1358.74 1458.23 C1361.97 1459.04 1365.21 1459.76 1368.47 1460.44 C1371.72 1461.12 1374.99 1461.71 1378.27 1462.30 C1381.55 1462.88 1384.84 1463.41 1388.13 1463.93 C1391.42 1464.44 1394.71 1464.94 1398.01 1465.39 C1401.30 1465.83 1404.60 1466.26 1407.90 1466.58 C1411.19 1466.90 1414.49 1467.16 1417.79 1467.29 C1421.09 1467.42 1424.40 1467.44 1427.70 1467.36 C1431.00 1467.27 1434.31 1467.06 1437.61 1466.80 C1440.92 1466.54 1444.23 1466.18 1447.53 1465.82 C1450.84 1465.46 1454.15 1465.04 1457.45 1464.61 C1460.75 1464.18 1464.05 1463.73 1467.34 1463.23 C1470.63 1462.73 1473.92 1462.21 1477.19 1461.61 C1480.46 1461.01 1483.72 1460.36 1486.97 1459.64 C1490.22 1458.93 1493.45 1458.14 1496.67 1457.31 C1499.89 1456.49 1503.10 1455.60 1506.30 1454.68 C1509.50 1453.77 1512.69 1452.82 1515.86 1451.81 C1519.02 1450.79 1522.18 1449.75 1525.30 1448.61 C1528.41 1447.48 1531.50 1446.27 1534.55 1444.98 C1537.60 1443.68 1540.61 1442.29 1543.60 1440.84 C1546.59 1439.39 1549.53 1437.84 1552.47 1436.28 C1555.40 1434.71 1558.31 1433.08 1561.21 1431.45 C1564.12 1429.82 1567.00 1428.15 1569.89 1426.48 C1572.77 1424.80 1575.65 1423.12 1578.51 1421.42 C1581.38 1419.72 1584.25 1418.01 1587.09 1416.27 C1589.93 1414.53 1592.76 1412.79 1595.56 1410.98 C1598.35 1409.17 1601.12 1407.33 1603.84 1405.43 C1606.56 1403.52 1609.25 1401.56 1611.89 1399.55 C1614.54 1397.54 1617.15 1395.47 1619.73 1393.37 C1622.31 1391.27 1624.86 1389.13 1627.39 1386.95 C1629.91 1384.78 1632.40 1382.57 1634.86 1380.33 C1637.32 1378.08 1639.74 1375.80 1642.13 1373.48 C1644.51 1371.16 1646.86 1368.80 1649.18 1366.42 C1651.50 1364.03 1653.79 1361.61 1656.04 1359.15 C1658.30 1356.70 1660.52 1354.22 1662.70 1351.71 C1664.89 1349.19 1667.03 1346.65 1669.15 1344.08 C1671.26 1341.50 1673.34 1338.90 1675.39 1336.28 C1677.44 1333.65 1679.47 1331.00 1681.46 1328.33 C1683.45 1325.66 1685.42 1322.97 1687.36 1320.26 C1689.30 1317.55 1691.21 1314.82 1693.08 1312.07 C1694.96 1309.32 1696.82 1306.55 1698.63 1303.75 C1700.44 1300.96 1702.22 1298.14 1703.95 1295.30 C1705.68 1292.46 1707.38 1289.59 1709.02 1286.70 C1710.66 1283.80 1712.25 1280.88 1713.78 1277.93 C1715.31 1274.98 1716.79 1272.00 1718.20 1268.98 C1719.60 1265.97 1720.94 1262.93 1722.20 1259.86 C1723.46 1256.78 1724.64 1253.68 1725.75 1250.55 C1726.86 1247.42 1727.89 1244.26 1728.85 1241.08 C1729.81 1237.90 1730.68 1234.69 1731.51 1231.47 C1732.34 1228.25 1733.09 1225.01 1733.82 1221.76 C1734.55 1218.51 1735.22 1215.25 1735.89 1211.98 C1736.56 1208.72 1737.19 1205.44 1737.81 1202.17 C1738.44 1198.89 1739.04 1195.61 1739.64 1192.33 C1740.24 1189.05 1740.82 1185.77 1741.40 1182.49 C1741.98 1179.20 1742.55 1175.92 1743.10 1172.63 C1743.66 1169.34 1744.21 1166.05 1744.72 1162.76 C1745.24 1159.47 1745.74 1156.17 1746.20 1152.87 C1746.67 1149.57 1747.10 1146.27 1747.52 1142.96 C1747.93 1139.65 1748.32 1136.34 1748.69 1133.03 C1749.06 1129.72 1749.41 1126.40 1749.74 1123.09 C1750.07 1119.77 1750.38 1116.45 1750.64 1113.13 C1750.91 1109.81 1751.14 1106.49 1751.31 1103.17 C1751.49 1099.85 1751.61 1096.52 1751.67 1093.19 C1751.74 1089.87 1751.75 1086.54 1751.73 1083.21 C1751.71 1079.88 1751.64 1076.55 1751.54 1073.22 C1751.45 1069.88 1751.33 1066.55 1751.18 1063.22 C1751.04 1059.89 1750.87 1056.56 1750.68 1053.24 C1750.49 1049.91 1750.28 1046.58 1750.05 1043.25 C1749.82 1039.93 1749.57 1036.60 1749.30 1033.28 C1749.03 1029.96 1748.74 1026.64 1748.43 1023.32 C1748.12 1020.00 1747.78 1016.68 1747.42 1013.37 C1747.06 1010.06 1746.67 1006.75 1746.26 1003.44 C1745.85 1000.13 1745.41 996.83 1744.94 993.53 C1744.46 990.23 1743.96 986.94 1743.42 983.65 C1742.87 980.37 1742.29 977.08 1741.68 973.81 C1741.06 970.54 1740.41 967.27 1739.73 964.01 C1739.05 960.75 1738.33 957.49 1737.58 954.25 C1736.82 951.00 1736.02 947.77 1735.19 944.54 C1734.36 941.32 1733.48 938.11 1732.57 934.90 C1731.66 931.70 1730.71 928.50 1729.74 925.32 C1728.76 922.13 1727.76 918.95 1726.71 915.79 C1725.67 912.63 1724.60 909.47 1723.49 906.33 C1722.38 903.19 1721.23 900.06 1720.05 896.94 C1718.88 893.82 1717.68 890.72 1716.45 887.62 C1715.23 884.52 1713.98 881.43 1712.71 878.34 C1711.44 875.26 1710.15 872.19 1708.83 869.13 C1707.51 866.07 1706.17 863.02 1704.81 859.97 C1703.45 856.93 1702.07 853.89 1700.68 850.86 C1699.29 847.83 1697.88 844.81 1696.46 841.79 C1695.05 838.77 1693.62 835.76 1692.18 832.75 C1690.74 829.75 1689.29 826.74 1687.84 823.74 C1686.38 820.74 1684.91 817.75 1683.44 814.76 C1681.97 811.76 1680.49 808.77 1679.02 805.78 C1677.54 802.80 1676.06 799.81 1674.58 796.82 C1673.10 793.83 1671.62 790.84 1670.13 787.86 C1668.65 784.87 1667.17 781.88 1665.69 778.89 C1664.22 775.90 1662.74 772.92 1661.27 769.92 C1659.81 766.93 1658.35 763.93 1656.90 760.92 C1655.46 757.92 1654.03 754.91 1652.62 751.89 C1651.21 748.87 1649.81 745.84 1648.43 742.80 C1647.05 739.77 1645.68 736.73 1644.31 733.69 C1642.95 730.65 1641.59 727.60 1640.23 724.56 C1638.87 721.51 1637.51 718.47 1636.15 715.42 C1634.79 712.38 1633.42 709.34 1632.06 706.29 C1630.69 703.25 1629.33 700.21 1627.97 697.16 C1626.61 694.12 1625.25 691.07 1623.90 688.02 C1622.56 684.97 1621.22 681.92 1619.90 678.86 C1618.58 675.80 1617.28 672.73 1615.98 669.65 C1614.69 666.58 1613.42 663.50 1612.16 660.41 C1610.90 657.33 1609.65 654.23 1608.42 651.14 C1607.19 648.04 1605.98 644.93 1604.78 641.82 C1603.59 638.71 1602.42 635.59 1601.26 632.46 C1600.11 629.33 1598.97 626.20 1597.86 623.06 C1596.75 619.91 1595.66 616.77 1594.60 613.61 C1593.54 610.45 1592.50 607.28 1591.50 604.10 C1590.51 600.92 1589.55 597.73 1588.63 594.53 C1587.71 591.33 1586.83 588.12 1585.98 584.90 C1585.14 581.68 1584.33 578.45 1583.57 575.21 C1582.82 571.97 1582.09 568.72 1581.46 565.47 C1580.83 562.21 1580.26 558.94 1579.81 555.67 C1579.37 552.39 1579.03 549.10 1578.80 545.80 C1578.56 542.50 1578.46 539.19 1578.41 535.88 C1578.37 532.56 1578.43 529.23 1578.52 525.93 C1578.60 522.63 1578.77 519.41 1578.92 516.08 C1579.08 512.75 1579.23 509.30 1579.44 505.95 C1579.66 502.60 1579.96 499.30 1580.22 495.97 C1580.48 492.65 1580.87 490.33 1581.00 486.00 C1581.13 481.67 1581.00 472.67 1581.00 470.00 Z" fill="none" stroke="#eea718" stroke-width="12"/>
</g>
</svg>
<div class="r" style="left:65px;top:932px;width:326px;height:201px;background:rgba(222,222,222,0.62)"></div>
<div class="r" style="left:391px;top:932px;width:115px;height:201px;background:#efefef"></div>
<div class="r" style="left:46px;top:932px;width:19px;height:201px;background:rgba(205,205,205,0.15)"></div>
<div class="t" style="left:81.82px;top:962.37px;font-size:35.61px;line-height:35.61px;font-weight:400;color:#262626;transform:scaleX(0.9644);-webkit-text-stroke:0.8px #262626;">IFT:</div>
<div class="t" style="left:84.82px;top:1015.87px;font-size:35.61px;line-height:35.61px;font-weight:400;color:#262626;transform:scaleX(0.9900);-webkit-text-stroke:0.8px #262626;">Wo number:</div>
<div class="t" style="left:84.83px;top:1070.87px;font-size:35.61px;line-height:35.61px;font-weight:400;color:#262626;transform:scaleX(0.9740);-webkit-text-stroke:0.8px #262626;">Volume:</div>
<div class="t" style="left:283.22px;top:962.37px;font-size:35.61px;line-height:35.61px;font-weight:400;color:#262626;transform:scaleX(0.9619);">31.80 mN/m</div>
<div class="t" style="left:283.21px;top:1015.87px;font-size:35.61px;line-height:35.61px;font-weight:400;color:#262626;transform:scaleX(0.9051);">0.746</div>
<div class="t" style="left:282.90px;top:1070.87px;font-size:35.61px;line-height:35.61px;font-weight:400;color:#262626;transform:scaleX(0.8990);">7.8 µL</div>
<div class="t" style="left:1607.61px;top:1592.56px;font-size:31.25px;line-height:31.25px;font-weight:400;color:#333;transform:scaleX(0.9261);">Position:</div>
<div class="t" style="left:1732.19px;top:1592.56px;font-size:31.25px;line-height:31.25px;font-weight:400;color:#333;transform:scaleX(0.8660);">X: 2388.9</div>
<div class="t" style="left:1864.69px;top:1592.56px;font-size:31.25px;line-height:31.25px;font-weight:400;color:#333;transform:scaleX(0.8663);">Y: 336.4</div>
<div class="r" style="left:1983px;top:1586px;width:2px;height:44px;background:#c8c8c8;"></div>
<div class="t" style="left:2003.54px;top:1592.56px;font-size:31.25px;line-height:31.25px;font-weight:400;color:#333;transform:scaleX(0.9446);">Zoom:</div>
<svg class="r" style="left:2101px;top:1591px" width="38" height="36" viewBox="0 0 38 36">
<circle cx="18" cy="13" r="9" fill="none" stroke="#333" stroke-width="2.5"/>
<path d="M24.5 19.5L34 29" stroke="#333" stroke-width="3.5" stroke-linecap="round"/>
</svg>
<div class="t" style="left:2101.12px;top:1614.93px;font-size:13.08px;line-height:13.08px;font-weight:700;color:#3d6ea6;transform:scaleX(1.0746);">100</div>
<svg class="r" style="left:2159px;top:1590px" width="33" height="33" viewBox="0 0 33 33">
<rect x="1" y="1" width="30" height="30" fill="none" stroke="#b8b8b8" stroke-width="2" stroke-dasharray="3 2"/>
<rect x="5" y="5" width="22" height="22" fill="#b9c8dc"/>
</svg>
<svg class="r" style="left:2214px;top:1590px" width="36" height="34" viewBox="0 0 36 34">
<rect x="0" y="0" width="36" height="34" fill="#3d6ea6"/>
<path d="M5 5L31 29M31 5L5 29" stroke="#fff" stroke-width="4"/>
<path d="M4 4H13L4 13Z M32 4V13L23 4Z M4 30V21L13 30Z M32 30H23L32 21Z" fill="#fff"/>
</svg>
<div class="r" style="left:2284px;top:1600px;width:20px;height:4px;background:#333;"></div>
<div class="r" style="left:2315px;top:1600px;width:279px;height:4px;background:#b0b0b0;"></div>
<div class="r" style="left:2332px;top:1587px;width:14px;height:29px;background:#3a3a3a;"></div>
<div class="r" style="left:2321px;top:1621px;width:2px;height:8px;background:#888;"></div>
<div class="r" style="left:2348px;top:1621px;width:2px;height:8px;background:#888;"></div>
<div class="r" style="left:2375px;top:1621px;width:2px;height:8px;background:#888;"></div>
<div class="r" style="left:2403px;top:1621px;width:2px;height:8px;background:#888;"></div>
<div class="r" style="left:2430px;top:1621px;width:2px;height:8px;background:#888;"></div>
<div class="r" style="left:2457px;top:1621px;width:2px;height:8px;background:#888;"></div>
<div class="r" style="left:2484px;top:1621px;width:2px;height:8px;background:#888;"></div>
<div class="r" style="left:2511px;top:1621px;width:2px;height:8px;background:#888;"></div>
<div class="r" style="left:2539px;top:1621px;width:2px;height:8px;background:#888;"></div>
<div class="r" style="left:2566px;top:1621px;width:2px;height:8px;background:#888;"></div>
<div class="r" style="left:2605px;top:1600px;width:20px;height:4px;background:#333;"></div>
<div class="r" style="left:2613px;top:1592px;width:4px;height:20px;background:#333;"></div>
<div class="t" style="left:2650.38px;top:1592.56px;font-size:31.25px;line-height:31.25px;font-weight:400;color:#333;transform:scaleX(0.8806);">41.8%</div>
<div class="r" style="left:46px;top:1655px;width:2745px;height:6px;background:#d6d6d6;"></div>
<div class="r" style="left:2810px;top:400px;width:7px;height:1713px;background:#d3d3d3;"></div>
<div class="r" style="left:46px;top:1681px;width:2745px;height:68px;background:#efefef;"></div>
<div class="t" style="left:53.51px;top:1697.57px;font-size:40.70px;line-height:40.70px;font-weight:400;color:#666;transform:scaleX(0.8301);">Results</div>
<div class="r" style="left:188px;top:1700px;width:2px;height:38px;background:#555;"></div>
<div class="t" style="left:210.58px;top:1697.57px;font-size:40.70px;line-height:40.70px;font-weight:400;color:#666;transform:scaleX(0.8707);">Results collection:</div>
<div class="t" style="left:511.25px;top:1697.57px;font-size:40.70px;line-height:40.70px;font-weight:400;color:#3a3a3a;transform:scaleX(0.9369);-webkit-text-stroke:0.9px #3a3a3a;">Pendant Drop</div>
<svg class="r" style="left:2347px;top:1696px" width="38" height="32" viewBox="0 0 38 32">
<g fill="#3d6ea6"><rect x="0" y="4" width="8" height="7"/><rect x="12" y="4" width="8" height="7"/><rect x="0" y="16" width="8" height="7"/><rect x="12" y="16" width="8" height="7"/></g>
<g fill="#aaa"><rect x="24" y="16" width="8" height="7"/><rect x="0" y="25" width="8" height="7"/><rect x="12" y="25" width="8" height="7"/><rect x="24" y="25" width="8" height="7"/></g>
<circle cx="29" cy="5" r="4.5" fill="#dba95e"/>
</svg>
<div class="t" style="left:2392.31px;top:1701.67px;font-size:29.94px;line-height:29.94px;font-weight:400;color:#333;transform:scaleX(0.9693);">New Collection</div>
<svg class="r" style="left:2602px;top:1712px" width="19" height="10" viewBox="0 0 19 10"><path d="M0 0H19L9.5 10Z" fill="#3a3a3a"/></svg>
<svg class="r" style="left:2638px;top:1698px" width="40" height="36" viewBox="0 0 40 36">
<rect x="0" y="15" width="7" height="16" fill="#6f9a8a"/>
<rect x="10" y="8" width="7" height="23" fill="#dba95e"/>
<rect x="20" y="0" width="7" height="20" fill="#cc5238"/>
<ellipse cx="29" cy="26" rx="10" ry="7" fill="#666"/>
<circle cx="29" cy="26" r="3.5" fill="#efefef"/><circle cx="29" cy="26" r="1.8" fill="#666"/>
</svg>
<div class="t" style="left:2682.78px;top:1701.67px;font-size:29.94px;line-height:29.94px;font-weight:400;color:#333;transform:scaleX(0.8997);">Review</div>
<div class="r" style="left:45px;top:1767px;width:2656px;height:344px;background:#fff;border:2px solid #a8a8a8;box-sizing:border-box"></div>
<div class="r" style="left:47px;top:1769px;width:2652px;height:49px;background:#f8f8f8;"></div>
<div class="r" style="left:47px;top:1818px;width:2652px;height:2px;background:#bdbdbd;"></div>
<div class="r" style="left:47px;top:1820px;width:2652px;height:48px;background:#f8f8f8;"></div>
<div class="r" style="left:47px;top:1868px;width:2652px;height:2px;background:#bdbdbd;"></div>
<div class="r" style="left:47px;top:1870px;width:262px;height:48px;background:#fafafa;"></div>
<div class="r" style="left:309px;top:1870px;width:2390px;height:48px;background:#e6eef8;"></div>
<div class="r" style="left:47px;top:1918px;width:2652px;height:2px;background:#d8d8d8;"></div>
<div class="r" style="left:47px;top:1995px;width:2652px;height:2px;background:#d8d8d8;"></div>
<div class="r" style="left:47px;top:2069px;width:2652px;height:2px;background:#d8d8d8;"></div>
<div class="r" style="left:47px;top:2071px;width:2652px;height:38px;background:#fafafa;"></div>
<div class="r" style="left:309px;top:1769px;width:5px;height:101px;background:#b8b8b8;"></div>
<div class="r" style="left:309px;top:1870px;width:4px;height:48px;background:#d4d4d4;"></div>
<div class="r" style="left:840px;top:1769px;width:5px;height:101px;background:#b8b8b8;"></div>
<div class="r" style="left:840px;top:1870px;width:4px;height:48px;background:#d4d4d4;"></div>
<div class="r" style="left:2164px;top:1769px;width:5px;height:101px;background:#b8b8b8;"></div>
<div class="r" style="left:2164px;top:1870px;width:4px;height:48px;background:#d4d4d4;"></div>
<div class="r" style="left:2431px;top:1769px;width:5px;height:101px;background:#b8b8b8;"></div>
<div class="r" style="left:2431px;top:1870px;width:4px;height:48px;background:#d4d4d4;"></div>
<div class="r" style="left:576px;top:1820px;width:2px;height:48px;background:#c4c4c4;"></div>
<div class="r" style="left:576px;top:1870px;width:2px;height:48px;background:#d4d4d4;"></div>
<div class="r" style="left:1107px;top:1820px;width:2px;height:48px;background:#c4c4c4;"></div>
<div class="r" style="left:1107px;top:1870px;width:2px;height:48px;background:#d4d4d4;"></div>
<div class="r" style="left:1371px;top:1820px;width:2px;height:48px;background:#c4c4c4;"></div>
<div class="r" style="left:1371px;top:1870px;width:2px;height:48px;background:#d4d4d4;"></div>
<div class="r" style="left:1635px;top:1820px;width:2px;height:48px;background:#c4c4c4;"></div>
<div class="r" style="left:1635px;top:1870px;width:2px;height:48px;background:#d4d4d4;"></div>
<div class="r" style="left:1899px;top:1820px;width:2px;height:48px;background:#c4c4c4;"></div>
<div class="r" style="left:1899px;top:1870px;width:2px;height:48px;background:#d4d4d4;"></div>
<div class="r" style="left:309px;top:1997px;width:4px;height:72px;background:#d8d8d8;"></div>
<div class="r" style="left:2164px;top:1997px;width:4px;height:72px;background:#d8d8d8;"></div>
<div class="r" style="left:2431px;top:1997px;width:4px;height:72px;background:#d8d8d8;"></div>
<div class="t" style="left:56.62px;top:1778.98px;font-size:30.16px;line-height:30.16px;font-weight:400;color:#333;transform:scaleX(0.9157);">General</div>
<div class="t" style="left:322.35px;top:1778.98px;font-size:30.16px;line-height:30.16px;font-weight:400;color:#333;transform:scaleX(0.9493);">Interfacial Tension</div>
<div class="t" style="left:854.46px;top:1778.98px;font-size:30.16px;line-height:30.16px;font-weight:400;color:#333;transform:scaleX(0.9106);">System</div>
<div class="t" style="left:2177.37px;top:1778.98px;font-size:30.16px;line-height:30.16px;font-weight:400;color:#333;transform:scaleX(0.9355);">Measurement Par...</div>
<div class="t" style="left:2442.65px;top:1778.98px;font-size:30.16px;line-height:30.16px;font-weight:400;color:#333;transform:scaleX(0.9431);">Miscellaneaous</div>
<div class="t" style="left:55.43px;top:1830.73px;font-size:30.16px;line-height:30.16px;font-weight:400;color:#333;transform:scaleX(1.0313);">No.</div>
<div class="t" style="left:322.29px;top:1830.73px;font-size:30.16px;line-height:30.16px;font-weight:400;color:#333;transform:scaleX(0.9704);">IFT [mN/m]</div>
<div class="t" style="left:588.61px;top:1830.73px;font-size:30.16px;line-height:30.16px;font-weight:400;color:#333;transform:scaleX(0.9473);">Wo</div>
<div class="t" style="left:853.38px;top:1830.73px;font-size:30.16px;line-height:30.16px;font-weight:400;color:#333;transform:scaleX(0.9326);">Drop Phase</div>
<div class="t" style="left:1119.63px;top:1830.73px;font-size:30.16px;line-height:30.16px;font-weight:400;color:#333;transform:scaleX(0.9305);">Ambient Phase</div>
<div class="t" style="left:1382.79px;top:1830.73px;font-size:30.16px;line-height:30.16px;font-weight:400;color:#333;">Δρ [g/cm³]</div>
<div class="t" style="left:1646.03px;top:1830.73px;font-size:30.16px;line-height:30.16px;font-weight:400;color:#333;transform:scaleX(1.0033);">ρ(d) [g/cm³]</div>
<div class="t" style="left:1909.86px;top:1830.73px;font-size:30.16px;line-height:30.16px;font-weight:400;color:#333;transform:scaleX(0.9900);">ρ(a) [g/cm³]</div>
<div class="t" style="left:2177.45px;top:1830.73px;font-size:30.16px;line-height:30.16px;font-weight:400;color:#333;transform:scaleX(0.9059);">Reference Size [...</div>
<div class="t" style="left:2443.54px;top:1830.73px;font-size:30.16px;line-height:30.16px;font-weight:400;color:#333;transform:scaleX(0.9674);">Comment</div>
<svg class="r" style="left:273px;top:1838px" width="19" height="10" viewBox="0 0 19 10"><path d="M0 10H19L9.5 0Z" fill="#333"/></svg>
<div class="t" style="left:284.09px;top:1879.98px;font-size:30.16px;line-height:30.16px;font-weight:400;color:#333;transform:scaleX(0.8433);">1</div>
<div class="t" style="left:496.92px;top:1879.98px;font-size:30.16px;line-height:30.16px;font-weight:400;color:#333;transform:scaleX(0.9542);">31.87</div>
<div class="t" style="left:748.94px;top:1879.98px;font-size:30.16px;line-height:30.16px;font-weight:400;color:#333;transform:scaleX(0.9119);">1.0500</div>
<div class="t" style="left:1014.06px;top:1879.98px;font-size:30.16px;line-height:30.16px;font-weight:400;color:#333;transform:scaleX(0.7815);">0.001..</div>
<div class="t" style="left:1119.63px;top:1879.98px;font-size:30.16px;line-height:30.16px;font-weight:400;color:#333;transform:scaleX(0.9355);">Air</div>
<div class="t" style="left:1540.53px;top:1879.98px;font-size:30.16px;line-height:30.16px;font-weight:400;color:#333;transform:scaleX(0.9158);">1.0487</div>
<div class="t" style="left:1805.44px;top:1879.98px;font-size:30.16px;line-height:30.16px;font-weight:400;color:#333;transform:scaleX(0.9119);">1.0500</div>
<div class="t" style="left:2069.90px;top:1879.98px;font-size:30.16px;line-height:30.16px;font-weight:400;color:#333;transform:scaleX(0.9083);">0.0013</div>
<div class="t" style="left:2367.98px;top:1879.98px;font-size:30.16px;line-height:30.16px;font-weight:400;color:#333;transform:scaleX(0.8927);">1.07</div>
<svg class="r" style="left:2319px;top:2081px" width="22" height="20" viewBox="0 0 22 20"><rect x="0" y="0" width="3" height="20" fill="#b0b0b0"/><path d="M3 10L12 0V20Z M12 10L21 0V20Z" fill="#b0b0b0"/></svg>
<svg class="r" style="left:2357px;top:2081px" width="20" height="20" viewBox="0 0 20 20"><path d="M0 10L9 0V20Z M10 10L19 0V20Z" fill="#b0b0b0"/></svg>
<svg class="r" style="left:2400px;top:2081px" width="12" height="20" viewBox="0 0 12 20"><path d="M0 10L11 0V20Z" fill="#b0b0b0"/></svg>
<div class="r" style="left:2425px;top:2073px;width:158px;height:36px;background:#fdfdfd;"></div>
<div class="t" style="left:2431.89px;top:2079.62px;font-size:26.45px;line-height:26.45px;font-weight:400;color:#333;transform:scaleX(0.9688);">Result 1 of 1</div>
<svg class="r" style="left:2599px;top:2081px" width="12" height="20" viewBox="0 0 12 20"><path d="M11 10L0 0V20Z" fill="#b0b0b0"/></svg>
<svg class="r" style="left:2633px;top:2081px" width="20" height="20" viewBox="0 0 20 20"><path d="M19 10L10 0V20Z M9 10L0 0V20Z" fill="#b0b0b0"/></svg>
<svg class="r" style="left:2669px;top:2081px" width="22" height="20" viewBox="0 0 22 20"><rect x="19" y="0" width="3" height="20" fill="#b0b0b0"/><path d="M19 10L10 0V20Z M9 10L0 0V20Z" fill="#b0b0b0"/></svg>
<div class="r" style="left:2722px;top:1768px;width:69px;height:345px;background:#efefef;"></div>
<svg class="r" style="left:2748px;top:1783px" width="16" height="23" viewBox="0 0 16 23"><path d="M13 2L3.5 11.5L13 21" fill="none" stroke="#333" stroke-width="4"/></svg>
<div class="t" style="left:2772.80px;top:1819.62px;font-size:36.05px;line-height:36.05px;color:#555;transform:rotate(90deg) scaleX(0.8614)">Available Analysis...</div>
<div class="r" style="left:2837px;top:400px;width:957px;height:67px;background:#efefef;"></div>
<div class="t" style="left:2844.00px;top:417.19px;font-size:40.55px;line-height:40.55px;font-weight:400;color:#666;transform:scaleX(0.8971);">Pendant Drop</div>
<svg class="r" style="left:2883px;top:478px;opacity:1.0" width="72" height="116" viewBox="0 0 72 116">
<path d="M16 29 C10 45 1.8 62 1.8 80 C1.8 100 17 114 36 114 C55 114 70.2 100 70.2 80 C70.2 62 62 45 56 29 Z" fill="#7b7779" stroke="#f0a520" stroke-width="3.6"/>
<path d="M15 8.3 A20 8.3 0 0 1 55 8.3 V30 A20 8.3 0 0 1 15 30 Z" fill="#636363"/>
</svg>
<div class="t" style="left:2998.19px;top:535.26px;font-size:31.25px;line-height:31.25px;font-weight:400;color:#333;transform:scaleX(0.9351);">Determination of the surface/interfacial tension</div>
<div class="r" style="left:2837px;top:630px;width:957px;height:48px;background:#efefef;"></div>
<div class="t" style="left:2846.93px;top:639.36px;font-size:31.25px;line-height:31.25px;font-weight:400;color:#333;transform:scaleX(0.9177);">Ambient phase</div>
<div class="r" style="left:2837px;top:689px;width:957px;height:52px;background:#fff;border:2px solid #a8a8a8;box-sizing:border-box"></div>
<div class="t" style="left:2848.93px;top:699.56px;font-size:31.25px;line-height:31.25px;font-weight:400;color:#333;transform:scaleX(0.9029);">Air</div>
<svg class="r" style="left:3724px;top:710px" width="20" height="10" viewBox="0 0 20 10"><path d="M0 0H20L10.0 10Z" fill="#333"/></svg>
<svg class="r" style="left:3761px;top:704px" width="26" height="22" viewBox="0 0 26 22">
<path d="M4 10A9 8 0 0 1 20 6" fill="none" stroke="#333" stroke-width="3"/>
<path d="M22 12A9 8 0 0 1 6 16" fill="none" stroke="#333" stroke-width="3"/>
<path d="M23 0V9H14Z" fill="#333"/><path d="M3 22V13H12Z" fill="#333"/>
</svg>
<div class="r" style="left:2837px;top:770px;width:957px;height:48px;background:#efefef;"></div>
<svg class="r" style="left:2852px;top:777px" width="26" height="34" viewBox="0 0 26 34"><path d="M13 0C9 8 1 16 1 22A12 12 0 0 0 25 22C25 16 17 8 13 0Z" fill="#4571a5"/></svg>
<div class="t" style="left:2893.38px;top:778.26px;font-size:31.25px;line-height:31.25px;font-weight:400;color:#333;transform:scaleX(0.9009);">Drop phase (ESr-N 11)</div>
<svg class="r" style="left:3193px;top:780px" width="29" height="29" viewBox="0 0 29 29"><rect width="29" height="29" fill="#0f7b1e"/><path d="M6 15L12 21L23 8" fill="none" stroke="#fff" stroke-width="3.5"/></svg>
<div class="r" style="left:2837px;top:827px;width:618px;height:53px;background:#fff;border:2px solid #a8a8a8;box-sizing:border-box"></div>
<div class="t" style="left:2847.70px;top:838.06px;font-size:31.25px;line-height:31.25px;font-weight:400;color:#333;transform:scaleX(0.9229);">Surfactant Solution A</div>
<svg class="r" style="left:3386px;top:850px" width="20" height="10" viewBox="0 0 20 10"><path d="M0 0H20L10.0 10Z" fill="#333"/></svg>
<svg class="r" style="left:3421px;top:845px" width="26" height="22" viewBox="0 0 26 22">
<path d="M4 10A9 8 0 0 1 20 6" fill="none" stroke="#333" stroke-width="3"/>
<path d="M22 12A9 8 0 0 1 6 16" fill="none" stroke="#333" stroke-width="3"/>
<path d="M23 0V9H14Z" fill="#333"/><path d="M3 22V13H12Z" fill="#333"/>
</svg>
<div class="r" style="left:3475px;top:827px;width:319px;height:53px;background:#f9f9f9;border:2px solid #a8a8a8;box-sizing:border-box"></div>
<div class="t" style="left:3600.65px;top:838.06px;font-size:31.25px;line-height:31.25px;font-weight:400;color:#333;transform:scaleX(0.9133);">Dose</div>
<div class="r" style="left:2838px;top:889px;width:493px;height:10px;background:#0a6cc2;"></div>
<div class="r" style="left:2837px;top:912px;width:957px;height:35px;background:#fbfbfb;"></div>
<svg class="r" style="left:3301px;top:921px" width="28" height="18" viewBox="0 0 28 18"><path d="M2 2L14 14L26 2" fill="none" stroke="#333" stroke-width="4.5"/></svg>
<div class="r" style="left:2837px;top:976px;width:957px;height:48px;background:#efefef;"></div>
<svg class="r" style="left:2845px;top:980px" width="38" height="38" viewBox="0 0 38 38">
<circle cx="19" cy="19" r="8" fill="#dba95e"/>
<g stroke="#dba95e" stroke-width="2.2"><path d="M19 0V6M19 32V38M0 19H6M32 19H38M5.5 5.5L9.5 9.5M28.5 28.5L32.5 32.5M5.5 32.5L9.5 28.5M28.5 9.5L32.5 5.5"/></g>
</svg>
<div class="t" style="left:2893.37px;top:985.56px;font-size:31.25px;line-height:31.25px;font-weight:400;color:#333;transform:scaleX(0.9050);">Brightness</div>
<div class="r" style="left:2846px;top:1050px;width:19px;height:5px;background:#333;"></div>
<div class="r" style="left:2877px;top:1050px;width:877px;height:5px;background:#b0b0b0;"></div>
<div class="r" style="left:2967px;top:1038px;width:13px;height:30px;background:#3a3a3a;"></div>
<div class="r" style="left:3766px;top:1050px;width:19px;height:5px;background:#333;"></div>
<div class="r" style="left:3773px;top:1043px;width:5px;height:19px;background:#333;"></div>
<div class="r" style="left:2883px;top:1072px;width:2px;height:7px;background:#888;"></div>
<div class="t" style="left:2859.48px;top:1095.27px;font-size:28.05px;line-height:28.05px;font-weight:400;color:#333;transform:scaleX(0.9938);">0 %</div>
<div class="r" style="left:3055px;top:1072px;width:2px;height:7px;background:#888;"></div>
<div class="t" style="left:3023.79px;top:1095.27px;font-size:28.05px;line-height:28.05px;font-weight:400;color:#333;transform:scaleX(1.0069);">20 %</div>
<div class="r" style="left:3228px;top:1072px;width:2px;height:7px;background:#888;"></div>
<div class="t" style="left:3197.17px;top:1095.27px;font-size:28.05px;line-height:28.05px;font-weight:400;color:#333;transform:scaleX(0.9944);">40 %</div>
<div class="r" style="left:3400px;top:1072px;width:2px;height:7px;background:#888;"></div>
<div class="t" style="left:3368.99px;top:1095.27px;font-size:28.05px;line-height:28.05px;font-weight:400;color:#333;transform:scaleX(1.0069);">60 %</div>
<div class="r" style="left:3573px;top:1072px;width:2px;height:7px;background:#888;"></div>
<div class="t" style="left:3541.80px;top:1095.27px;font-size:28.05px;line-height:28.05px;font-weight:400;color:#333;transform:scaleX(1.0035);">80 %</div>
<div class="r" style="left:3746px;top:1072px;width:2px;height:7px;background:#888;"></div>
<div class="t" style="left:3706.51px;top:1095.27px;font-size:28.05px;line-height:28.05px;font-weight:400;color:#333;transform:scaleX(0.9933);">100 %</div>
<div class="r" style="left:2837px;top:1748px;width:957px;height:61px;background:#efefef;"></div>
<div class="t" style="left:2844.01px;top:1760.39px;font-size:40.55px;line-height:40.55px;font-weight:400;color:#666;transform:scaleX(0.8926);">Measurement</div>
<div class="r" style="left:2837px;top:1828px;width:957px;height:109px;background:#e6eef8;border:3px solid #0a6cc2;box-sizing:border-box"></div>
<svg class="r" style="left:2867px;top:1836px;opacity:1.0" width="50" height="77" viewBox="0 0 72 116">
<path d="M16 29 C10 45 1.8 62 1.8 80 C1.8 100 17 114 36 114 C55 114 70.2 100 70.2 80 C70.2 62 62 45 56 29 Z" fill="#7b7779" stroke="#f0a520" stroke-width="3.6"/>
<path d="M15 8.3 A20 8.3 0 0 1 55 8.3 V30 A20 8.3 0 0 1 15 30 Z" fill="#636363"/>
</svg>
<div class="t" style="left:3096.27px;top:1864.81px;font-size:43.60px;line-height:43.60px;font-weight:400;color:#505050;transform:scaleX(0.9254);">Measure surface tension</div>
<div class="r" style="left:2837px;top:1957px;width:957px;height:110px;background:#fbfbfb;border:2px solid #f7cf92;box-sizing:border-box"></div>
<svg class="r" style="left:2867px;top:1965px;opacity:1.0" width="50" height="77" viewBox="0 0 72 116">
<path d="M16 29 C10 45 1.8 62 1.8 80 C1.8 100 17 114 36 114 C55 114 70.2 100 70.2 80 C70.2 62 62 45 56 29 Z" fill="#c8c8c8" stroke="#f5d6a8" stroke-width="3.6"/>
<path d="M15 8.3 A20 8.3 0 0 1 55 8.3 V30 A20 8.3 0 0 1 15 30 Z" fill="#c4c4c4"/>
</svg>
<div class="t" style="left:3109.76px;top:1993.81px;font-size:43.60px;line-height:43.60px;font-weight:400;color:#b4b4b4;transform:scaleX(0.9011);">Evaluate Instant Replay</div>
<div class="r" style="left:2837px;top:2077px;width:957px;height:36px;background:#fbfbfb;"></div>
<svg class="r" style="left:3301px;top:2087px" width="28" height="18" viewBox="0 0 28 18"><path d="M2 2L14 14L26 2" fill="none" stroke="#333" stroke-width="4.5"/></svg>
<svg class="r" style="left:3651px;top:1884px" width="28" height="42" viewBox="0 0 28 42">
<path d="M1.5 1.5V33L9 26L14.5 39L20 36.5L14.5 24H25Z" fill="#fff" stroke="#222" stroke-width="2"/>
</svg>
</body></html>
